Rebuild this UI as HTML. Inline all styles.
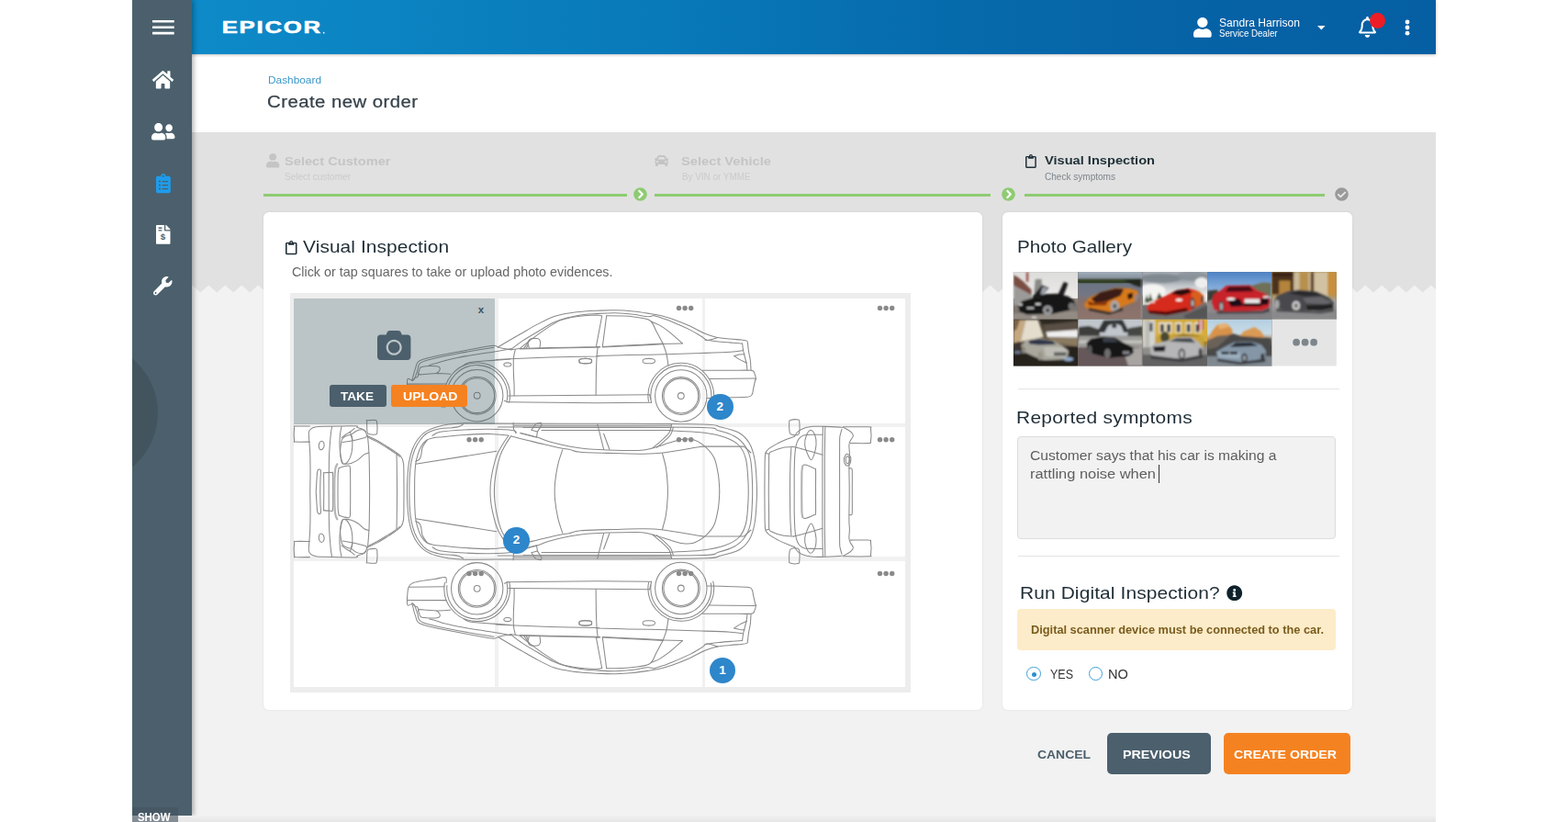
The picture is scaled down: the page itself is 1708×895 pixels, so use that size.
<!DOCTYPE html>
<html lang="en"><head><meta charset="utf-8"><title>Create new order</title>
<style>
html,body{margin:0;padding:0;background:#fff;}
body{width:1708px;height:895px;overflow:hidden;font-family:"Liberation Sans",sans-serif;}
#app{position:absolute;left:0;top:0;width:1708px;height:895px;overflow:hidden;}
.a{position:absolute;}
.t{position:absolute;white-space:nowrap;line-height:1;font-family:"Liberation Sans",sans-serif;}
svg{position:absolute;overflow:visible;}
</style></head>
<body><div id="app">
<!-- page backgrounds -->
<div class="a" style="left:209px;top:0;width:1354.5px;height:895px;background:#f2f2f2;"></div>
<div class="a" style="left:144px;top:888px;width:1419.5px;height:7px;background:linear-gradient(#f0f0f0,#e6e6e6);"></div>
<!-- grey band with zigzag bottom -->
<svg style="left:209px;top:144px;overflow:hidden;" width="1354.6" height="180" viewBox="209 144 1354.6 180">
<path id="zz" fill="#e1e1e1" d="M209 144H1564V314 L1576.6 310.5 L1567.6 318.4 L1558.7 310.5 L1549.8 318.4 L1540.8 310.5 L1531.9 318.4 L1523.0 310.5 L1514.0 318.4 L1505.1 310.5 L1496.1 318.4 L1487.2 310.5 L1478.3 318.4 L1469.3 310.5 L1460.4 318.4 L1451.5 310.5 L1442.5 318.4 L1114.3 310.5 L1105.3 318.4 L1096.4 310.5 L1087.5 318.4 L1078.5 310.5 L1069.5 318.4 L1060.6 310.5 L1051.7 318.4 L1042.7 310.5 L1033.8 318.4 L317.2 310.5 L308.2 318.4 L299.2 310.5 L290.2 318.4 L281.2 310.5 L272.2 318.4 L263.2 310.5 L254.2 318.4 L245.2 310.5 L236.2 318.4 L227.2 310.5 L218.2 318.4 L209.2 310.5 L200.2 318.4 L191.2 310.5L209 314Z"/>
</svg>
<!-- white title band -->
<div class="a" style="left:209px;top:59px;width:1354.5px;height:85px;background:#fff;"></div>
<!-- header -->
<div class="a" style="left:209px;top:0;width:1354.5px;height:59px;background:linear-gradient(90deg,#0e8ac8 0%,#0879b9 38%,#066aab 62%,#0661a5 85%,#065fa3 100%);box-shadow:0 1px 3px rgba(0,0,0,.25);"></div>
<!-- sidebar -->
<div class="a" style="left:144px;top:0;width:65.2px;height:888px;background:#4b606c;box-shadow:2px 0 5px rgba(0,0,0,.3);clip-path:inset(0 -12px 0 0);"></div>
<div class="a" style="left:144px;top:372px;width:66px;height:154px;overflow:hidden;"><div class="a" style="left:-125.200px;top:0.500px;width:153px;height:153px;border-radius:50%;background:#42555f;"></div></div>
<div class="a" style="left:144px;top:879px;width:50px;height:16px;background:rgba(70,84,96,.62);"></div>
<!-- step lines -->
<div class="a" style="left:287px;top:210.5px;width:396px;height:3px;background:#8ecb72;"></div>
<div class="a" style="left:712.5px;top:210.5px;width:366.5px;height:3px;background:#8ecb72;"></div>
<div class="a" style="left:1116px;top:210.5px;width:327px;height:3px;background:#8ecb72;"></div>
<!-- cards -->
<div class="a" style="left:287px;top:231px;width:782.5px;height:542px;background:#fff;border-radius:6px;box-shadow:0 0 3px rgba(0,0,0,.08);"></div>
<div class="a" style="left:1091.5px;top:231px;width:381px;height:542px;background:#fff;border-radius:6px;box-shadow:0 0 3px rgba(0,0,0,.08);"></div>
<!-- grid -->
<div class="a" style="left:315.6px;top:319.1px;width:676px;height:434.7px;background:#ededee;"></div>
<div class="a" style="left:320.4px;top:325px;width:218.6px;height:136px;background:#fff;"></div>
<div class="a" style="left:542.5px;top:325px;width:222px;height:136px;background:#fff;"></div>
<div class="a" style="left:768px;top:325px;width:218px;height:136px;background:#fff;"></div>
<div class="a" style="left:320.4px;top:464.5px;width:218.6px;height:141.5px;background:#fff;"></div>
<div class="a" style="left:542.5px;top:464.5px;width:222px;height:141.5px;background:#fff;"></div>
<div class="a" style="left:768px;top:464.5px;width:218px;height:141.5px;background:#fff;"></div>
<div class="a" style="left:320.4px;top:610.5px;width:218.6px;height:137.5px;background:#fff;"></div>
<div class="a" style="left:542.5px;top:610.5px;width:222px;height:137.5px;background:#fff;"></div>
<div class="a" style="left:768px;top:610.5px;width:218px;height:137.5px;background:#fff;"></div>
<div class="a" style="left:539px;top:325px;width:3.5px;height:423px;background:#f1f1f1;"></div>
<div class="a" style="left:764.5px;top:325px;width:3.5px;height:423px;background:#f1f1f1;"></div>
<div class="a" style="left:320.4px;top:461px;width:665.6px;height:3.5px;background:#f1f1f1;"></div>
<div class="a" style="left:320.4px;top:606px;width:665.6px;height:4.5px;background:#f1f1f1;"></div>
<!-- right panel pieces -->
<div class="a" style="left:1108.5px;top:423px;width:350px;height:1px;background:#e4e4e4;"></div>
<div class="a" style="left:1108.5px;top:604.5px;width:350px;height:1px;background:#e4e4e4;"></div>
<div class="a" style="left:1108px;top:475px;width:345.3px;height:109.8px;background:#f2f2f2;border:1px solid #dcdcdc;border-radius:4px;box-sizing:content-box;"></div>
<div class="a" style="left:1261.8px;top:505.5px;width:1.2px;height:20px;background:#333;"></div>
<div class="a" style="left:1108px;top:663.2px;width:347px;height:44.8px;background:#fdecc9;border-radius:4px;"></div>
<!-- buttons -->
<div class="a" style="left:1206px;top:798px;width:112.5px;height:44.5px;background:#4b5f6c;border-radius:5px;"></div>
<div class="a" style="left:1332.5px;top:798px;width:138px;height:44.5px;background:#f58220;border-radius:5px;"></div>

<!-- cars -->
<svg style="left:0;top:0" width="1708" height="895" viewBox="0 0 1708 895">
<g fill="none" stroke="#8a8a8a" stroke-width="1.05" stroke-linecap="round" stroke-linejoin="round">
<defs><g id="sidecar">
<path d="M542.5 378.0C544.2 377.0 548.4 374.4 552.5 372.0C556.7 369.5 561.9 366.4 567.6 363.2C573.2 360.0 580.3 355.7 586.4 352.6C592.4 349.4 598.1 346.4 603.9 344.4C609.8 342.4 616.0 341.5 621.5 340.7C626.9 339.8 631.7 339.4 636.5 339.0C641.3 338.6 644.4 338.5 650.0 338.3C655.6 338.1 663.4 337.6 670.1 337.8C676.8 337.9 683.9 338.4 690.2 339.0C696.4 339.6 702.7 340.7 707.7 341.5C712.7 342.3 716.1 342.8 720.3 343.8C724.4 344.8 727.6 345.7 732.8 347.5C738.0 349.4 745.7 352.5 751.6 355.1C757.4 357.7 762.9 361.1 767.9 363.2C772.9 365.3 779.4 366.9 781.7 367.6"/>
<path d="M556.3 380.8C558.4 379.2 563.8 374.7 568.8 371.4C573.8 368.0 580.7 364.0 586.4 360.7C592.0 357.4 597.4 353.7 602.7 351.3C607.9 348.9 612.1 347.5 617.7 346.0C623.3 344.6 631.1 343.3 636.5 342.5C641.9 341.8 644.4 341.8 650.0 341.5C655.6 341.2 663.4 340.7 670.1 340.8C676.8 340.9 684.3 341.6 690.2 342.3C696.0 342.9 701.5 344.6 705.2 344.8C709.0 345.0 711.5 343.7 712.7 343.5"/>
<path d="M566.3 379.5C568.2 378.0 573.0 373.8 577.6 370.4C582.2 366.9 588.7 362.1 593.9 358.6C599.1 355.1 604.3 351.6 608.9 349.4C613.5 347.3 616.9 346.6 621.5 345.7C626.1 344.7 631.7 344.2 636.5 343.8C641.3 343.3 646.8 343.0 650.0 343.0C653.2 343.1 654.8 343.9 655.7 344.0"/>
<path d="M660.7 343.8C663.3 343.8 671.5 343.8 676.4 344.0C681.3 344.2 685.0 344.2 690.2 345.0C695.4 345.8 703.5 346.1 707.7 348.8C711.9 351.5 712.8 357.1 715.2 361.3C717.6 365.5 721.0 372.0 722.1 374.1"/>
<path d="M712.7 343.8C714.4 344.3 719.4 345.8 722.8 346.9C726.1 348.1 728.0 348.7 732.8 350.7C737.6 352.7 746.4 356.5 751.6 359.1C756.8 361.7 761.0 364.5 764.1 366.3C767.2 368.2 767.5 370.1 770.4 370.4C773.3 370.6 779.8 368.1 781.7 367.6"/>
<path d="M709.6 350.1C711.2 350.8 715.8 352.6 719.0 354.4C722.2 356.3 724.9 358.1 729.0 361.3C733.1 364.6 741.0 371.8 743.4 373.9"/>
<path d="M743.4 373.9L722.1 374.5"/>
<path d="M655.7 344.0L649.4 377.4"/>
<path d="M660.7 343.8L656.3 377.4"/>
<path d="M566.3 379.5C571.8 379.4 585.0 378.9 598.9 378.6C612.9 378.3 641.6 377.8 650.0 377.6C658.5 377.4 649.5 377.4 649.4 377.4"/>
<path d="M566.3 380.0C571.8 379.9 585.0 379.5 598.9 379.2C612.9 379.0 641.6 378.5 650.0 378.2C658.5 378.0 649.5 378.0 649.4 378.0"/>
<path d="M656.3 377.4C660.7 377.2 671.7 376.7 682.7 376.1C693.6 375.6 715.6 374.4 722.1 374.1"/>
<path d="M656.3 378.0C660.7 377.8 671.7 377.3 682.7 376.7C693.6 376.2 715.6 375.1 722.1 374.7"/>
<path d="M576.4 378.6C576.1 377.8 575.0 375.4 575.1 373.9C575.2 372.3 575.8 370.4 577.0 369.5C578.1 368.5 580.3 368.3 582.0 368.2C583.7 368.2 585.9 368.4 587.0 369.1C588.1 369.8 588.5 371.0 588.6 372.6C588.8 374.2 588.0 377.6 587.9 378.6"/>
<path d="M570.7 379.1L576.6 371.1"/>
<path d="M573.2 379.1L575.3 375.4"/>
<path d="M540.0 391.4C543.6 391.2 551.5 390.8 561.3 390.4C571.1 390.0 584.1 389.6 598.9 389.1C613.7 388.7 641.3 388.2 650.0 387.9C658.8 387.6 645.9 387.6 651.3 387.4C656.8 387.2 670.2 386.9 682.7 386.6C695.1 386.4 712.3 386.1 725.9 385.8C739.5 385.4 752.5 384.9 764.1 384.5C775.7 384.1 787.9 383.7 795.4 383.3C803.0 382.8 806.9 381.9 809.2 381.6"/>
<path d="M781.7 367.6C784.0 367.8 791.1 368.7 795.4 369.1C799.8 369.5 804.9 369.8 808.0 370.1C811.0 370.4 812.5 370.5 813.6 371.1C814.7 371.7 814.3 373.4 814.5 373.9"/>
<path d="M767.9 370.1C770.4 370.4 777.9 371.5 782.9 372.0C787.9 372.5 793.7 372.9 797.9 373.2C802.2 373.6 806.8 374.0 808.6 374.1"/>
<path d="M814.5 373.9C814.7 375.3 815.0 379.5 815.5 382.6C816.0 385.8 817.0 389.2 817.4 392.7C817.8 396.1 817.9 401.5 818.0 403.3"/>
<path d="M808.6 374.1C808.8 375.5 809.1 379.1 809.8 382.6C810.6 386.1 812.3 391.7 813.0 395.2C813.7 398.6 813.8 402.0 814.0 403.3"/>
<path d="M799.8 387.6C800.8 387.4 803.6 386.5 805.5 386.1C807.3 385.8 810.2 385.8 811.1 385.8"/>
<path d="M799.8 387.6C800.8 388.3 803.2 390.2 805.5 391.4C807.8 392.7 812.3 394.5 813.6 395.2"/>
<path d="M765.4 403.3C770.4 403.3 786.7 403.3 795.4 403.3C804.2 403.3 813.6 402.8 818.0 403.3C822.4 403.8 820.8 404.9 821.8 406.4C822.7 408.0 823.4 411.7 823.6 412.7C823.8 413.7 823.5 410.7 823.0 412.5C822.5 414.4 821.1 421.0 820.5 423.8C819.9 426.6 820.1 428.1 819.2 429.4C818.4 430.8 819.0 431.4 815.5 432.0C811.9 432.5 805.5 432.6 797.9 432.8C790.4 433.1 775.0 433.5 770.4 433.6"/>
<path d="M772.3 412.5L822.4 411.9"/>
<path d="M722.1 374.1C722.8 375.9 724.9 381.1 725.9 385.1C726.9 389.2 727.7 396.1 728.0 398.3"/>
<path d="M553.8 431.1L650.0 430.2L707.7 429.8"/>
<path d="M551.9 437.8L650.0 438.8L709.6 438.2"/>
<path d="M549.4 436.3L553.2 437.8"/>
<path d="M707.7 429.8L709.6 438.2"/>
<path d="M561.3 380.8C561.0 382.3 559.7 386.1 559.4 390.2C559.1 394.2 559.3 400.2 559.4 405.2C559.5 410.2 560.0 416.0 560.1 420.2C560.2 424.5 560.1 429.0 560.1 430.7"/>
<path d="M651.3 377.4C651.1 379.1 650.4 383.0 650.1 387.6C649.8 392.3 649.6 398.1 649.4 405.2C649.3 412.3 649.1 425.9 649.1 430.1"/>
<path d="M542.5 378.0C541.7 377.7 541.1 376.0 537.4 376.2C533.7 376.4 526.8 377.9 520.5 379.0C514.2 380.1 506.4 381.6 499.4 382.9C492.3 384.3 484.1 385.9 478.3 387.1C472.4 388.4 467.7 389.4 464.2 390.3C460.6 391.2 458.8 391.9 457.1 392.8C455.5 393.6 455.0 394.4 454.3 395.6C453.6 396.8 453.4 398.2 452.9 399.8C452.4 401.4 451.7 403.6 451.1 405.4C450.6 407.3 450.1 409.7 449.7 411.1C449.3 412.5 448.9 413.4 448.7 413.9"/>
<path d="M538.1 378.3C535.2 378.8 527.0 380.1 520.5 381.1C514.1 382.2 506.4 383.4 499.4 384.7C492.3 386.0 484.1 387.6 478.3 388.9C472.4 390.2 467.5 391.4 464.2 392.4C460.9 393.4 459.9 394.0 458.5 394.9C457.2 395.8 456.7 396.4 456.1 397.7C455.5 399.0 455.5 400.7 455.0 402.6C454.5 404.5 453.5 407.2 452.9 409.0C452.3 410.7 451.8 412.2 451.1 413.2C450.4 414.1 449.1 414.4 448.7 414.6"/>
<path d="M566.3 379.5C564.7 379.7 558.0 380.7 556.3 380.8C554.6 380.8 558.5 379.4 556.1 379.7C553.6 380.0 547.6 381.6 541.6 382.5C535.7 383.5 527.5 384.6 520.5 385.7C513.5 386.8 505.2 388.1 499.4 389.2C493.5 390.4 489.3 391.4 485.3 392.4C481.3 393.5 478.4 394.7 475.4 395.6C472.5 396.4 469.0 397.2 467.7 397.5"/>
<path d="M542.5 378.0C543.6 378.2 546.5 379.0 548.8 379.5C551.1 380.0 555.0 380.5 556.3 380.8"/>
<path d="M556.1 391.0C551.3 391.4 534.9 392.5 527.5 393.1C520.2 393.7 515.8 393.8 512.1 394.5C508.3 395.3 506.2 397.2 505.0 397.7"/>
<path d="M458.5 399.8C460.4 399.0 464.6 398.7 467.7 398.5C470.8 398.4 475.3 398.5 477.2 399.0C479.1 399.4 479.1 400.4 479.3 401.2C479.5 402.1 479.0 403.1 478.3 404.0C477.5 404.9 477.2 406.0 475.1 406.5C473.0 407.0 468.7 407.0 465.6 407.2C462.4 407.4 457.5 408.3 456.1 407.7C454.6 407.0 456.4 404.6 456.8 403.3C457.2 402.0 456.7 400.6 458.5 399.8Z"/>
<path d="M475.4 406.6C476.8 406.6 481.4 406.6 483.9 406.7C486.4 406.8 489.5 407.1 490.6 407.2"/>
<path d="M486.1 436.9C486.0 437.9 487.2 442.3 485.1 442.9C483.0 443.6 478.0 441.7 473.6 441.1C469.2 440.4 462.7 439.8 458.6 438.9C454.4 438.1 450.8 437.2 448.5 436.1C446.3 434.9 445.8 433.9 445.0 431.9C444.2 429.9 444.0 426.9 443.8 424.1C443.5 421.4 443.4 417.4 443.5 415.4C443.6 413.4 443.6 412.4 444.5 412.2C445.5 412.1 448.4 414.0 449.2 414.4"/>
<path d="M445.4 432.3L484.2 432.7"/>
<path d="M443.5 418.1L486.1 417.9"/>
<path d="M449.2 414.4C449.7 413.9 451.4 412.0 452.3 411.4C453.2 410.7 454.2 411.2 454.8 410.4C455.4 409.6 455.8 407.2 456.1 406.6"/>
<path d="M550.5 395.2C552.2 394.7 553.5 394.7 555.2 395.2C556.9 395.6 556.9 396.0 556.9 396.9C556.9 397.9 556.9 398.2 555.2 398.7C553.5 399.1 552.2 399.1 550.5 398.7C548.8 398.2 548.8 397.9 548.8 396.9C548.8 396.0 548.8 395.6 550.5 395.2Z"/>
<path d="M633.2 390.8C636.2 390.2 639.3 390.2 642.3 390.8C645.4 391.4 644.6 391.9 644.6 393.1C644.6 394.3 645.4 394.8 642.3 395.4C639.3 396.0 636.2 396.0 633.2 395.4C630.1 394.8 630.9 394.3 630.9 393.1C630.9 391.9 630.1 391.4 633.2 390.8Z"/>
<path d="M633.3 390.8C636.3 390.2 639.2 390.2 642.1 390.8C645.1 391.4 644.4 391.9 644.4 393.1C644.4 394.3 645.1 394.8 642.1 395.4C639.2 396.0 636.3 396.0 633.3 395.4C630.4 394.8 631.0 394.3 631.0 393.1C631.0 391.9 630.4 391.4 633.3 390.8Z"/>
<path d="M702.5 390.8C705.4 390.2 708.1 390.2 711.0 390.8C713.9 391.4 713.4 391.9 713.4 393.1C713.4 394.3 713.9 394.8 711.0 395.4C708.1 396.0 705.4 396.0 702.5 395.4C699.6 394.8 700.2 394.3 700.2 393.1C700.2 391.9 699.6 391.4 702.5 390.8Z"/>
<circle cx="519.7" cy="430.7" r="28.2"/>
<circle cx="519.7" cy="430.7" r="18.9"/>
<circle cx="519.7" cy="430.7" r="20.4"/>
<circle cx="519.7" cy="430.7" r="3.4"/>
<path d="M486.9 434.1A33.0 33.0 0 1 1 552.2 436.4"/>
<path d="M484.4 436.9A35.8 35.8 0 1 1 554.7 438.1"/>
<circle cx="741.8" cy="431.0" r="28.2"/>
<circle cx="741.8" cy="431.0" r="18.9"/>
<circle cx="741.8" cy="431.0" r="20.4"/>
<circle cx="741.8" cy="431.0" r="3.4"/>
<path d="M709.0 434.4A33.0 33.0 0 1 1 774.3 436.7"/>
<path d="M706.5 437.2A35.8 35.8 0 1 1 776.8 438.4"/>
</g>
</defs>
<use href="#sidecar"/>
<use href="#sidecar" transform="translate(0 1071.5) scale(1 -1)"/>
<g id="topcar">
<path d="M824.2 525.0C823.9 517.5 823.3 507.1 822.0 500.0C820.7 492.9 819.1 487.3 816.2 482.5C813.4 477.7 810.2 474.2 805.0 471.2C799.8 468.3 791.7 466.5 785.0 465.0C778.3 463.5 786.7 462.6 765.0 462.0C743.3 461.4 692.1 461.4 655.0 461.2C617.9 461.1 567.4 461.2 542.5 461.1C517.6 461.0 514.6 460.5 505.7 460.7C496.7 460.9 493.8 461.4 488.8 462.1C483.8 462.8 479.9 463.6 475.6 464.9C471.4 466.2 466.9 467.8 463.5 470.1C460.0 472.3 457.4 475.4 455.0 478.5C452.7 481.6 450.9 484.8 449.4 488.8C447.8 492.9 446.6 497.4 445.6 502.9C444.7 508.4 444.1 514.1 443.8 521.7C443.4 529.2 443.4 540.8 443.8 548.3C444.1 555.9 444.7 561.6 445.6 567.1C446.6 572.6 447.8 577.1 449.4 581.2C450.9 585.2 452.7 588.4 455.0 591.5C457.4 594.6 460.0 597.7 463.5 599.9C466.9 602.2 471.4 603.8 475.6 605.1C479.9 606.4 483.8 607.2 488.8 607.9C493.8 608.6 496.7 609.1 505.7 609.3C514.6 609.5 517.6 609.0 542.5 608.9C567.4 608.8 617.9 608.9 655.0 608.8C692.1 608.6 743.3 608.6 765.0 608.0C786.7 607.4 778.3 606.5 785.0 605.0C791.7 603.5 799.8 601.7 805.0 598.8C810.2 595.8 813.4 592.3 816.2 587.5C819.1 582.7 820.7 577.1 822.0 570.0C823.3 562.9 823.9 552.5 824.2 545.0C824.6 537.5 824.6 532.5 824.2 525.0Z"/>
<path d="M504.7 461.9C503.9 462.3 502.1 463.8 500.0 464.4C498.0 465.1 496.0 465.3 492.5 465.7C489.1 466.1 483.9 465.8 479.4 466.8C474.9 467.8 469.0 469.4 465.3 471.5C461.7 473.6 459.6 476.4 457.4 479.5C455.1 482.5 453.3 485.9 451.7 489.8C450.2 493.7 448.9 497.6 448.0 502.9C447.0 508.2 446.4 514.1 446.1 521.7C445.8 529.2 445.8 540.8 446.1 548.3C446.4 555.9 447.0 561.8 448.0 567.1C448.9 572.4 450.2 576.3 451.7 580.2C453.3 584.1 455.1 587.5 457.4 590.5C459.6 593.6 461.7 596.4 465.3 598.5C469.0 600.6 474.9 602.2 479.4 603.2C483.9 604.2 489.1 603.9 492.5 604.3C496.0 604.7 498.0 604.9 500.0 605.6C502.1 606.2 503.9 607.7 504.7 608.1"/>
<path d="M554.0 474.3C550.6 474.0 541.9 472.5 533.8 472.4C525.8 472.3 514.3 473.0 505.7 473.5C497.1 474.1 487.8 475.2 482.2 475.7C476.6 476.2 474.9 476.2 471.9 476.8C468.9 477.5 466.6 477.9 464.4 479.5C462.2 481.0 460.3 483.4 458.8 486.0C457.2 488.7 456.0 492.1 455.0 495.4C454.0 498.7 453.2 501.3 452.7 505.7C452.1 510.1 451.9 514.6 451.7 521.7C451.6 528.8 451.6 541.2 451.7 548.3C451.9 555.4 452.1 559.9 452.7 564.3C453.2 568.7 454.0 571.3 455.0 574.6C456.0 577.9 457.2 581.3 458.8 584.0C460.3 586.6 462.2 589.0 464.4 590.5C466.6 592.1 468.9 592.5 471.9 593.2C474.9 593.8 476.6 593.8 482.2 594.3C487.8 594.8 497.1 595.9 505.7 596.5C514.3 597.0 525.8 597.7 533.8 597.6C541.9 597.5 550.6 596.0 554.0 595.7"/>
<path d="M542.5 465.0C561.2 465.0 617.9 464.9 655.0 465.0C692.1 465.1 743.8 464.9 765.0 465.5C786.2 466.1 776.7 467.2 782.5 468.8C788.3 470.3 795.2 472.3 800.0 475.0C804.8 477.7 808.3 480.8 811.2 485.0C814.2 489.2 816.1 493.3 817.5 500.0C818.9 506.7 819.2 517.5 819.5 525.0C819.8 532.5 819.8 537.5 819.5 545.0C819.2 552.5 818.9 563.3 817.5 570.0C816.1 576.7 814.2 580.8 811.2 585.0C808.3 589.2 804.8 592.3 800.0 595.0C795.2 597.7 788.3 599.7 782.5 601.2C776.7 602.8 786.2 603.9 765.0 604.5C743.8 605.1 692.1 604.9 655.0 605.0C617.9 605.1 561.2 605.0 542.5 605.0"/>
<path d="M730.0 468.8C736.2 469.2 757.5 470.0 767.5 471.2C777.5 472.5 783.8 474.0 790.0 476.2C796.2 478.5 801.2 481.0 805.0 485.0C808.8 489.0 810.8 493.3 812.5 500.0C814.2 506.7 814.6 517.5 815.0 525.0C815.4 532.5 815.4 537.5 815.0 545.0C814.6 552.5 814.2 563.3 812.5 570.0C810.8 576.7 808.8 581.0 805.0 585.0C801.2 589.0 796.2 591.5 790.0 593.8C783.8 596.0 777.5 597.5 767.5 598.8C757.5 600.0 736.2 600.8 730.0 601.2"/>
<path d="M471.0 474.3C472.4 473.6 473.6 471.3 479.4 470.3C485.2 469.2 496.6 468.5 505.7 468.0C514.7 467.5 524.9 467.1 533.8 467.3C542.7 467.4 554.4 468.0 559.1 468.7C563.8 469.4 561.5 471.0 562.0 471.5"/>
<path d="M471.0 595.7C472.4 596.4 473.6 598.7 479.4 599.7C485.2 600.8 496.6 601.5 505.7 602.0C514.7 602.5 524.9 602.9 533.8 602.7C542.7 602.6 554.4 602.0 559.1 601.3C563.8 600.6 561.5 599.0 562.0 598.5"/>
<path d="M452.7 502.4C453.4 502.0 455.9 501.3 456.9 500.1C457.9 498.9 458.2 497.6 458.8 495.4C459.3 493.2 459.1 489.7 460.2 487.0C461.3 484.2 464.5 480.3 465.3 479.0"/>
<path d="M452.7 567.6C453.4 568.0 455.9 568.7 456.9 569.9C457.9 571.1 458.2 572.4 458.8 574.6C459.3 576.8 459.1 580.3 460.2 583.0C461.3 585.8 464.5 589.7 465.3 591.0"/>
<path d="M452.7 505.2L540.8 491.2"/>
<path d="M452.7 564.8L540.8 578.8"/>
<path d="M560.0 463.2L731.2 463.2"/>
<path d="M560.0 606.8L731.2 606.8"/>
<path d="M570.0 465.5L731.2 465.5"/>
<path d="M570.0 604.5L731.2 604.5"/>
<path d="M590.0 468.5L730.0 468.5"/>
<path d="M590.0 601.5L730.0 601.5"/>
<path d="M554.0 474.3C553.0 475.8 550.0 479.7 547.9 483.2C545.8 486.7 543.2 490.6 541.3 495.4C539.4 500.2 537.8 507.0 536.6 512.3C535.5 517.6 534.7 522.2 534.3 527.3C533.9 532.4 533.9 537.6 534.3 542.7C534.7 547.8 535.5 552.4 536.6 557.7C537.8 563.0 539.4 569.8 541.3 574.6C543.2 579.4 545.8 583.3 547.9 586.8C550.0 590.3 553.0 594.2 554.0 595.7"/>
<path d="M556.3 475.2C555.4 476.7 552.6 480.8 550.7 484.1C548.8 487.5 546.7 490.7 545.1 495.4C543.4 500.1 541.9 507.0 540.8 512.3C539.8 517.6 539.0 522.2 538.7 527.3C538.3 532.4 538.3 537.6 538.7 542.7C539.0 547.8 539.8 552.4 540.8 557.7C541.9 563.0 543.4 569.9 545.1 574.6C546.7 579.3 548.8 582.5 550.7 585.9C552.6 589.2 555.4 593.3 556.3 594.8"/>
<path d="M612.7 489.8C611.9 492.5 609.0 500.1 607.7 506.1C606.3 512.2 605.1 519.9 604.5 526.2C604.0 532.5 604.0 537.5 604.5 543.8C605.1 550.1 606.3 557.8 607.7 563.9C609.0 569.9 611.9 577.5 612.7 580.2"/>
<path d="M721.5 493.6C722.1 496.1 724.3 503.2 725.3 508.6C726.2 514.1 726.8 520.3 727.1 526.2C727.5 532.0 727.5 538.0 727.1 543.8C726.8 549.7 726.2 555.9 725.3 561.4C724.3 566.8 722.1 573.9 721.5 576.4"/>
<path d="M567.6 471.7C570.5 472.4 579.9 474.5 585.1 476.1C590.3 477.6 593.1 479.4 598.9 481.1C604.7 482.7 613.3 484.8 620.0 486.1C626.6 487.4 632.5 488.2 638.8 488.8C645.1 489.5 648.2 489.6 657.6 489.8C667.0 490.1 686.4 490.8 695.2 490.5C704.0 490.1 704.0 489.5 710.2 488.0C716.5 486.4 727.1 482.7 732.8 481.1C738.4 479.5 740.3 478.7 744.1 478.3C747.8 477.9 751.4 477.5 755.3 478.8C759.3 480.1 764.1 482.8 767.9 486.1C771.6 489.4 775.5 493.6 777.9 498.6C780.3 503.6 781.3 511.1 782.3 516.2C783.2 521.2 783.3 525.5 783.5 528.7C783.8 531.8 783.7 533.9 783.8 535.0"/>
<path d="M567.6 598.3C570.5 597.6 579.9 595.5 585.1 593.9C590.3 592.4 593.1 590.6 598.9 588.9C604.7 587.3 613.3 585.2 620.0 583.9C626.6 582.6 632.5 581.8 638.8 581.2C645.1 580.5 648.2 580.4 657.6 580.2C667.0 579.9 686.4 579.2 695.2 579.5C704.0 579.9 704.0 580.5 710.2 582.0C716.5 583.6 727.1 587.3 732.8 588.9C738.4 590.5 740.3 591.3 744.1 591.7C747.8 592.1 751.4 592.5 755.3 591.2C759.3 589.9 764.1 587.2 767.9 583.9C771.6 580.6 775.5 576.4 777.9 571.4C780.3 566.4 781.3 558.9 782.3 553.8C783.2 548.8 783.3 544.5 783.5 541.3C783.8 538.2 783.7 536.1 783.8 535.0"/>
<path d="M556.3 474.8C559.2 475.5 567.8 477.7 573.8 479.2C579.9 480.7 586.4 482.4 592.6 483.8C598.9 485.3 606.9 487.1 611.4 488.0C616.0 488.9 616.5 488.5 620.0 489.2C623.5 489.9 624.2 491.6 632.5 492.3C640.9 493.1 658.8 493.3 670.1 493.6C681.4 493.9 691.4 494.3 700.2 494.2C709.0 494.1 713.1 494.1 722.8 493.0C732.4 491.8 750.7 488.5 757.8 487.3C764.9 486.2 764.1 486.3 765.4 486.1"/>
<path d="M556.3 595.2C559.2 594.5 567.8 592.3 573.8 590.8C579.9 589.3 586.4 587.6 592.6 586.2C598.9 584.7 606.9 582.9 611.4 582.0C616.0 581.1 616.5 581.5 620.0 580.8C623.5 580.1 624.2 578.4 632.5 577.7C640.9 576.9 658.8 576.7 670.1 576.4C681.4 576.1 691.4 575.7 700.2 575.8C709.0 575.9 713.1 575.9 722.8 577.0C732.4 578.2 750.7 581.5 757.8 582.7C764.9 583.8 764.1 583.7 765.4 583.9"/>
<path d="M765.4 486.1L810.5 486.1L818.0 493.0"/>
<path d="M765.4 583.9L810.5 583.9L818.0 577.0"/>
<path d="M650.7 461.6L657.6 489.2"/>
<path d="M650.7 608.4L657.6 580.8"/>
<path d="M657.6 472.3L663.9 489.2"/>
<path d="M657.6 597.7L663.9 580.8"/>
<path d="M731.5 462.3C731.1 463.7 730.9 468.1 729.0 471.0C727.1 474.0 723.3 477.0 720.3 479.8C717.2 482.6 712.4 486.6 710.9 488.0"/>
<path d="M731.5 607.7C731.1 606.3 730.9 601.9 729.0 599.0C727.1 596.0 723.3 593.0 720.3 590.2C717.2 587.4 712.4 583.4 710.9 582.0"/>
<path d="M733.4 465.4C732.9 466.8 732.1 470.9 730.3 473.5C728.5 476.2 725.3 478.8 722.8 481.1C720.3 483.4 716.5 486.3 715.2 487.3"/>
<path d="M733.4 604.6C732.9 603.2 732.1 599.1 730.3 596.5C728.5 593.8 725.3 591.2 722.8 588.9C720.3 586.6 716.5 583.7 715.2 582.7"/>
<path d="M559.1 460.2C559.2 461.4 559.1 465.4 559.6 467.3C560.1 469.1 561.6 470.8 562.0 471.5"/>
<path d="M559.1 609.8C559.2 608.6 559.1 604.6 559.6 602.7C560.1 600.9 561.6 599.2 562.0 598.5"/>
<path d="M578.8 468.2L583.5 461.6L589.2 460.2L590.1 462.6L585.4 470.1Z"/>
<path d="M578.8 601.8L583.5 608.4L589.2 609.8L590.1 607.4L585.4 599.9Z"/>
<path d="M566.6 471.5L584.5 476.2L585.4 470.1"/>
<path d="M566.6 598.5L584.5 593.8L585.4 599.9"/>
</g>
<g id="frontcar">
<path d="M337.4 464.0C334.8 464.0 325.0 463.8 322.2 464.0C319.4 464.3 320.8 462.8 320.6 465.4C320.3 468.1 320.3 477.1 320.6 479.7C320.8 482.3 319.1 480.9 321.9 481.1C324.7 481.4 334.8 481.1 337.4 481.1"/>
<path d="M337.4 606.6C334.8 606.6 325.0 606.8 322.2 606.6C319.4 606.3 320.8 607.8 320.6 605.2C320.3 602.5 320.3 593.5 320.6 590.9C320.8 588.3 319.1 589.7 321.9 589.5C324.7 589.2 334.8 589.5 337.4 589.5"/>
<path d="M400.0 474.0C399.5 473.0 398.5 469.7 396.7 468.3C394.9 466.9 390.9 466.2 389.1 465.4C387.4 464.7 392.4 463.9 386.3 463.7C380.1 463.5 359.2 464.1 352.1 464.3C345.0 464.5 345.8 464.5 343.5 465.0C341.3 465.4 340.0 465.9 338.8 466.9C337.6 467.8 336.8 468.7 336.4 470.7C336.1 472.6 336.5 475.0 336.7 478.7C336.9 482.5 337.4 487.4 337.7 493.0C337.9 498.5 338.0 505.6 338.0 512.0C338.1 518.3 337.9 526.4 337.8 531.0C337.8 535.6 337.8 535.0 337.8 539.6C337.9 544.2 338.1 552.3 338.0 558.6C338.0 565.0 337.9 572.1 337.7 577.6C337.4 583.2 336.9 588.1 336.7 591.9C336.5 595.6 336.1 598.0 336.4 599.9C336.8 601.9 337.6 602.8 338.8 603.7C340.0 604.7 341.3 605.2 343.5 605.6C345.8 606.1 345.0 606.1 352.1 606.3C359.2 606.5 380.1 607.1 386.3 606.9C392.4 606.7 387.4 605.9 389.1 605.2C390.9 604.4 394.9 603.7 396.7 602.3C398.5 600.9 399.5 597.6 400.0 596.6"/>
<path d="M361.6 464.5C361.3 466.1 360.6 469.2 360.2 474.0C359.7 478.7 359.1 486.7 358.7 493.0C358.4 499.3 358.4 505.6 358.3 512.0C358.2 518.3 358.2 526.4 358.2 531.0C358.1 535.6 358.1 535.0 358.2 539.6C358.2 544.2 358.2 552.3 358.3 558.6C358.4 565.0 358.4 571.3 358.7 577.6C359.1 583.9 359.7 591.9 360.2 596.6C360.6 601.4 361.3 604.5 361.6 606.1"/>
<path d="M372.0 464.5C371.8 465.8 371.0 469.1 370.6 472.1C370.3 475.1 369.9 479.1 369.9 482.5C369.9 486.0 370.3 490.0 370.6 493.0C371.0 496.0 371.6 498.6 372.0 500.6C372.5 502.6 373.2 504.1 373.5 504.9"/>
<path d="M372.0 606.1C371.8 604.8 371.0 601.5 370.6 598.5C370.3 595.5 369.9 591.5 369.9 588.1C369.9 584.6 370.3 580.6 370.6 577.6C371.0 574.6 371.6 572.0 372.0 570.0C372.5 568.0 373.2 566.5 373.5 565.7"/>
<path d="M350.2 480.2C351.0 480.2 352.5 481.4 352.8 482.5C353.2 483.7 353.1 486.1 352.6 487.3C352.0 488.5 350.6 489.7 349.7 489.7C348.9 489.7 347.8 488.5 347.5 487.3C347.2 486.1 347.4 483.7 347.8 482.5C348.3 481.4 349.3 480.2 350.2 480.2Z"/>
<path d="M350.2 590.4C351.0 590.4 352.5 589.2 352.8 588.1C353.2 586.9 353.1 584.5 352.6 583.3C352.0 582.1 350.6 580.9 349.7 580.9C348.9 580.9 347.8 582.1 347.5 583.3C347.2 584.5 347.4 586.9 347.8 588.1C348.3 589.2 349.3 590.4 350.2 590.4Z"/>
<path d="M371.6 482.5C372.0 480.0 372.0 479.1 373.0 477.8C374.0 476.4 376.1 475.1 377.7 474.5C379.3 473.8 381.4 473.1 382.5 474.0C383.5 474.9 383.8 476.5 383.9 479.7C384.0 482.9 383.7 489.3 383.0 493.0C382.2 496.6 381.0 499.5 379.6 501.5C378.3 503.6 376.1 505.2 374.9 505.3C373.6 505.5 372.7 504.5 372.0 502.5C371.3 500.4 370.7 496.3 370.6 493.0C370.5 489.7 371.2 485.1 371.6 482.5Z"/>
<path d="M371.6 588.1C372.0 590.6 372.0 591.5 373.0 592.8C374.0 594.2 376.1 595.5 377.7 596.1C379.3 596.8 381.4 597.5 382.5 596.6C383.5 595.7 383.8 594.1 383.9 590.9C384.0 587.7 383.7 581.3 383.0 577.6C382.2 574.0 381.0 571.1 379.6 569.1C378.3 567.0 376.1 565.4 374.9 565.3C373.6 565.1 372.7 566.1 372.0 568.1C371.3 570.2 370.7 574.3 370.6 577.6C370.5 580.9 371.2 585.5 371.6 588.1Z"/>
<path d="M372.0 476.8C372.8 476.2 375.2 474.2 376.8 473.0C378.4 471.9 379.9 471.3 381.5 470.2C383.1 469.1 385.5 467.0 386.3 466.4"/>
<path d="M372.0 593.8C372.8 594.4 375.2 596.4 376.8 597.6C378.4 598.7 379.9 599.3 381.5 600.4C383.1 601.5 385.5 603.6 386.3 604.2"/>
<path d="M382.5 473.5C383.4 472.8 386.1 470.2 388.2 469.2C390.2 468.3 393.1 467.7 394.8 467.8C396.6 468.0 398.0 469.8 398.6 470.2"/>
<path d="M382.5 597.1C383.4 597.8 386.1 600.4 388.2 601.4C390.2 602.3 393.1 602.9 394.8 602.8C396.6 602.6 398.0 600.8 398.6 600.4"/>
<path d="M373.0 481.6C374.9 481.3 380.3 480.6 384.4 479.7C388.5 478.8 395.1 477.3 397.7 476.4C400.2 475.4 399.3 474.4 399.6 474.0"/>
<path d="M373.0 589.0C374.9 589.3 380.3 590.0 384.4 590.9C388.5 591.8 395.1 593.3 397.7 594.2C400.2 595.2 399.3 596.2 399.6 596.6"/>
<path d="M381.5 470.2C381.7 470.8 382.1 472.4 382.5 474.0C382.9 475.6 383.7 478.7 383.9 479.7"/>
<path d="M381.5 600.4C381.7 599.8 382.1 598.2 382.5 596.6C382.9 595.0 383.7 591.9 383.9 590.9"/>
<path d="M400.0 457.8C401.5 457.6 406.9 457.1 408.6 457.4C410.3 457.6 410.1 457.0 410.5 459.3C410.9 461.6 411.0 468.8 410.8 471.1C410.5 473.4 410.5 472.8 409.1 473.0C407.6 473.3 403.4 473.0 401.9 472.6C400.4 472.1 400.4 472.5 400.0 470.2C399.6 467.9 399.6 460.9 399.6 458.8C399.6 456.7 398.5 458.1 400.0 457.8Z"/>
<path d="M400.0 612.8C401.5 613.0 406.9 613.5 408.6 613.2C410.3 613.0 410.1 613.6 410.5 611.3C410.9 609.0 411.0 601.8 410.8 599.5C410.5 597.2 410.5 597.8 409.1 597.6C407.6 597.3 403.4 597.6 401.9 598.0C400.4 598.5 400.4 598.1 400.0 600.4C399.6 602.7 399.6 609.7 399.6 611.8C399.6 613.9 398.5 612.5 400.0 612.8Z"/>
<path d="M400.0 474.5C401.9 475.3 407.6 477.9 411.0 479.7C414.4 481.5 417.3 483.4 420.5 485.4C423.6 487.4 427.3 489.7 430.0 491.6C432.7 493.5 435.0 494.6 436.6 496.8C438.2 498.9 438.9 500.3 439.5 504.4C440.0 508.5 439.9 514.0 439.9 521.5C440.0 528.9 440.0 541.7 439.9 549.1C439.9 556.6 440.0 562.1 439.5 566.2C438.9 570.3 438.2 571.7 436.6 573.8C435.0 576.0 432.7 577.1 430.0 579.0C427.3 580.9 423.6 583.2 420.5 585.2C417.3 587.2 414.4 589.1 411.0 590.9C407.6 592.7 401.9 595.3 400.0 596.1"/>
<path d="M401.5 476.4C403.1 477.2 407.8 479.4 411.0 481.1C414.1 482.9 417.3 484.8 420.5 486.8C423.6 488.8 427.4 491.2 430.0 493.0C432.5 494.7 434.7 496.5 435.7 497.3"/>
<path d="M401.5 594.2C403.1 593.4 407.8 591.2 411.0 589.5C414.1 587.7 417.3 585.8 420.5 583.8C423.6 581.8 427.4 579.4 430.0 577.6C432.5 575.9 434.7 574.1 435.7 573.3"/>
<path d="M432.0 494.9C432.1 497.7 432.3 506.0 432.3 512.0C432.4 518.0 432.5 526.4 432.5 531.0C432.6 535.6 432.6 535.0 432.5 539.6C432.5 544.2 432.4 552.6 432.3 558.6C432.3 564.6 432.1 572.9 432.0 575.7"/>
<path d="M400.5 474.9C400.8 478.0 401.6 486.8 401.9 493.0C402.3 499.2 402.3 505.6 402.4 512.0C402.5 518.3 402.6 526.4 402.6 531.0C402.6 535.6 402.6 535.0 402.6 539.6C402.6 544.2 402.5 552.3 402.4 558.6C402.3 565.0 402.3 571.4 401.9 577.6C401.6 583.8 400.8 592.6 400.5 595.7"/>
<path d="M374.9 505.3C376.1 505.2 379.9 505.2 382.5 504.4C385.0 503.6 387.7 502.2 390.1 500.6C392.4 499.0 394.7 496.2 396.7 494.9C398.7 493.6 401.1 493.3 401.9 493.0"/>
<path d="M374.9 565.3C376.1 565.4 379.9 565.4 382.5 566.2C385.0 567.0 387.7 568.4 390.1 570.0C392.4 571.6 394.7 574.4 396.7 575.7C398.7 577.0 401.1 577.3 401.9 577.6"/>
<path d="M369.2 509.6C370.1 509.3 373.0 508.1 374.9 507.7C376.8 507.3 379.5 506.5 380.6 507.2C381.7 507.9 381.3 508.0 381.5 512.0C381.7 515.9 381.7 526.4 381.7 531.0C381.7 535.6 381.7 535.0 381.7 539.6C381.7 544.2 381.7 554.7 381.5 558.6C381.3 562.6 381.7 562.7 380.6 563.4C379.5 564.1 376.8 563.3 374.9 562.9C373.0 562.5 370.1 561.3 369.2 561.0"/>
<path d="M369.2 509.6C369.0 510.6 368.4 512.2 368.2 515.8C368.0 519.3 368.1 527.0 368.0 531.0C368.0 534.9 368.0 535.7 368.0 539.6C368.1 543.6 368.0 551.3 368.2 554.8C368.4 558.4 369.0 560.0 369.2 561.0"/>
<path d="M352.6 514.8C353.9 514.7 359.0 514.2 360.6 514.4C362.3 514.5 362.2 513.0 362.5 515.8C362.9 518.5 362.7 527.0 362.7 531.0C362.8 534.9 362.8 535.7 362.7 539.6C362.7 543.6 362.9 552.1 362.5 554.8C362.2 557.6 362.3 556.1 360.6 556.2C359.0 556.4 353.9 555.9 352.6 555.8"/>
<path d="M352.6 514.8C352.6 517.5 352.7 526.8 352.8 531.0C352.8 535.1 352.8 535.5 352.8 539.6C352.7 543.8 352.6 553.1 352.6 555.8"/>
<path d="M345.4 515.8C345.6 515.1 345.8 512.8 346.2 512.0C346.6 511.2 347.3 511.0 347.8 511.0C348.4 511.1 349.2 510.7 349.4 512.5C349.6 514.2 349.2 517.9 349.0 521.5C348.9 525.0 348.8 531.3 348.8 533.8C348.7 536.4 348.7 534.2 348.8 536.8C348.8 539.3 348.9 545.6 349.0 549.1C349.2 552.7 349.6 556.4 349.4 558.1C349.2 559.9 348.4 559.5 347.8 559.6C347.3 559.6 346.6 559.4 346.2 558.6C345.8 557.8 345.6 555.5 345.4 554.8"/>
<path d="M345.4 515.8C345.2 518.8 344.5 530.3 344.3 533.8C344.1 537.3 344.1 533.3 344.3 536.8C344.5 540.3 345.2 551.8 345.4 554.8"/>
<path d="M367.3 505.3C367.0 506.1 365.9 507.4 365.4 510.1C364.9 512.8 364.6 517.7 364.4 521.5C364.3 525.3 364.4 530.2 364.3 532.9C364.3 535.6 364.3 535.0 364.3 537.7C364.4 540.4 364.3 545.3 364.4 549.1C364.6 552.9 364.9 557.8 365.4 560.5C365.9 563.2 367.0 564.5 367.3 565.3" stroke="#b5b5b5" stroke-width="2.2"/>
</g>
<g id="rearcar">
<path d="M865.4 475.2C864.1 475.7 860.5 476.9 857.5 478.1C854.6 479.3 851.0 480.8 847.7 482.5C844.4 484.3 840.1 486.6 837.8 488.4C835.5 490.2 834.7 490.7 833.9 493.4C833.1 496.0 833.3 498.1 833.1 504.2C833.0 510.2 833.0 523.6 832.9 529.8C832.9 535.9 832.9 534.7 832.9 540.8C833.0 547.0 833.0 560.4 833.1 566.4C833.3 572.5 833.1 574.6 833.9 577.2C834.7 579.9 835.5 580.4 837.8 582.2C840.1 584.0 844.4 586.3 847.7 588.1C851.0 589.8 854.6 591.3 857.5 592.5C860.5 593.7 864.1 594.9 865.4 595.4"/>
<path d="M864.4 486.5C862.4 486.6 856.5 486.6 852.6 487.5C848.7 488.3 843.2 490.4 840.8 491.6C838.3 492.7 838.4 492.2 837.8 494.3C837.3 496.4 837.7 498.3 837.6 504.2C837.6 510.1 837.4 523.6 837.3 529.8C837.3 535.9 837.3 534.7 837.3 540.8C837.4 547.0 837.6 560.5 837.6 566.4C837.7 572.3 837.3 574.2 837.8 576.3C838.4 578.4 838.3 577.9 840.8 579.0C843.2 580.2 848.7 582.3 852.6 583.1C856.5 584.0 862.4 584.0 864.4 584.1"/>
<path d="M833.9 493.4L837.8 494.3"/>
<path d="M833.9 577.2L837.8 576.3"/>
<path d="M864.4 486.5C866.9 487.1 873.9 488.9 879.1 490.4C884.4 491.9 893.1 494.5 895.9 495.3"/>
<path d="M864.4 584.1C866.9 583.5 873.9 581.7 879.1 580.2C884.4 578.7 893.1 576.1 895.9 575.3"/>
<path d="M860.9 457.5C862.6 457.0 867.7 456.6 869.3 457.0C870.9 457.3 870.6 457.0 870.8 459.4C871.0 461.9 871.1 469.3 870.5 471.7C869.9 474.1 868.9 473.5 867.3 473.7C865.8 473.9 862.7 473.4 861.4 472.7C860.2 472.0 860.3 472.0 860.0 469.8C859.7 467.5 859.5 461.5 859.7 459.4C859.8 457.4 859.3 457.9 860.9 457.5Z"/>
<path d="M860.9 613.1C862.6 613.6 867.7 614.0 869.3 613.6C870.9 613.3 870.6 613.6 870.8 611.2C871.0 608.7 871.1 601.3 870.5 598.9C869.9 596.5 868.9 597.1 867.3 596.9C865.8 596.7 862.7 597.2 861.4 597.9C860.2 598.6 860.3 598.6 860.0 600.8C859.7 603.1 859.5 609.1 859.7 611.2C859.8 613.2 859.3 612.7 860.9 613.1Z"/>
<path d="M865.4 475.2C866.0 474.3 867.3 471.3 869.3 469.8C871.3 468.2 874.2 466.7 877.2 465.8C880.1 464.9 883.7 464.6 887.0 464.3C890.3 464.1 891.9 464.2 896.9 464.3C901.8 464.5 912.4 464.9 916.5 465.3C920.6 465.7 919.6 465.9 921.4 466.8C923.2 467.7 926.0 469.4 927.3 470.7C928.7 472.0 929.5 473.2 929.3 474.7C929.1 476.1 927.1 478.0 926.4 479.6C925.6 481.2 925.0 482.0 924.9 484.5C924.7 487.0 925.4 491.1 925.4 494.3C925.4 497.6 924.9 498.3 924.9 504.2C924.8 510.1 925.1 523.6 925.2 529.8C925.2 535.9 925.2 534.7 925.2 540.8C925.1 547.0 924.8 560.5 924.9 566.4C924.9 572.3 925.4 573.0 925.4 576.3C925.4 579.5 924.7 583.6 924.9 586.1C925.0 588.6 925.6 589.4 926.4 591.0C927.1 592.6 929.1 594.5 929.3 595.9C929.5 597.4 928.7 598.6 927.3 599.9C926.0 601.2 923.2 602.9 921.4 603.8C919.6 604.7 920.6 604.9 916.5 605.3C912.4 605.7 901.8 606.1 896.9 606.3C891.9 606.4 890.3 606.5 887.0 606.3C883.7 606.0 880.1 605.7 877.2 604.8C874.2 603.9 871.3 602.4 869.3 600.8C867.3 599.3 866.0 596.3 865.4 595.4"/>
<path d="M918.5 464.8C923.1 464.8 941.0 464.5 946.0 464.8C951.0 465.2 948.1 464.2 948.5 466.8C948.9 469.4 948.9 478.0 948.5 480.6C948.1 483.2 949.7 482.2 946.0 482.5C942.3 482.9 929.6 482.5 926.4 482.5"/>
<path d="M918.5 605.8C923.1 605.8 941.0 606.1 946.0 605.8C951.0 605.4 948.1 606.4 948.5 603.8C948.9 601.2 948.9 592.6 948.5 590.0C948.1 587.4 949.7 588.4 946.0 588.1C942.3 587.7 929.6 588.1 926.4 588.1"/>
<path d="M895.9 473.2C894.4 473.2 890.3 473.1 887.0 473.2C883.7 473.3 879.0 473.0 876.2 473.7C873.4 474.4 871.8 475.8 870.3 477.6C868.8 479.4 868.1 481.7 867.3 484.5C866.6 487.3 866.2 489.4 865.9 494.3C865.5 499.3 865.3 508.1 865.2 514.0C865.1 519.9 865.2 525.3 865.2 529.8C865.2 534.2 865.2 536.4 865.2 540.8C865.2 545.3 865.1 550.7 865.2 556.6C865.3 562.5 865.5 571.3 865.9 576.3C866.2 581.2 866.6 583.3 867.3 586.1C868.1 588.9 868.8 591.2 870.3 593.0C871.8 594.8 873.4 596.2 876.2 596.9C879.0 597.6 883.7 597.3 887.0 597.4C890.3 597.5 894.4 597.4 895.9 597.4"/>
<path d="M861.9 487.5C861.8 490.2 861.2 497.1 860.9 504.2C860.7 511.2 860.5 523.6 860.5 529.8C860.4 535.9 860.4 534.7 860.5 540.8C860.5 547.0 860.7 559.4 860.9 566.4C861.2 573.5 861.8 580.4 861.9 583.1"/>
<path d="M883.1 468.3C884.7 468.3 887.0 472.0 888.0 474.7C889.0 477.4 889.1 481.2 889.0 484.5C888.8 487.8 887.9 491.6 887.0 494.3C886.1 497.0 884.8 500.7 883.6 500.7C882.3 500.7 880.8 497.0 879.6 494.3C878.5 491.6 876.9 487.8 876.7 484.5C876.4 481.2 877.1 477.4 878.2 474.7C879.2 472.0 881.4 468.3 883.1 468.3Z"/>
<path d="M883.1 602.3C884.7 602.3 887.0 598.6 888.0 595.9C889.0 593.2 889.1 589.4 889.0 586.1C888.8 582.8 887.9 579.0 887.0 576.3C886.1 573.6 884.8 569.9 883.6 569.9C882.3 569.9 880.8 573.6 879.6 576.3C878.5 579.0 876.9 582.8 876.7 586.1C876.4 589.4 877.1 593.2 878.2 595.9C879.2 598.6 881.4 602.3 883.1 602.3Z"/>
<path d="M896.4 464.3C896.3 469.3 895.9 483.4 895.9 494.3C895.8 505.2 895.9 522.0 895.9 529.8C895.9 537.5 895.9 533.1 895.9 540.8C895.9 548.6 895.8 565.4 895.9 576.3C895.9 587.2 896.3 601.3 896.4 606.3"/>
<path d="M898.8 464.8C898.7 469.8 898.4 483.5 898.3 494.3C898.2 505.2 898.3 522.0 898.3 529.8C898.3 537.5 898.3 533.1 898.3 540.8C898.3 548.6 898.2 565.4 898.3 576.3C898.4 587.1 898.7 600.8 898.8 605.8"/>
<path d="M917.0 467.3C916.7 468.5 915.5 471.8 915.0 474.7C914.6 477.5 914.6 475.3 914.6 484.5C914.5 493.7 914.6 520.4 914.6 529.8C914.6 539.1 914.6 531.5 914.6 540.8C914.6 550.2 914.5 576.9 914.6 586.1C914.6 595.3 914.6 593.1 915.0 595.9C915.5 598.8 916.7 602.1 917.0 603.3"/>
<path d="M925.2 510.1C925.6 510.1 927.3 509.4 927.8 510.1C928.4 510.7 928.2 510.7 928.3 514.0C928.4 517.3 928.3 525.3 928.3 529.8C928.3 534.2 928.3 536.4 928.3 540.8C928.3 545.3 928.4 553.3 928.3 556.6C928.2 559.9 928.4 559.9 927.8 560.5C927.3 561.2 925.6 560.5 925.2 560.5"/>
<path d="M922.9 494.3C923.8 494.6 925.7 496.1 926.4 497.3C927.0 498.4 927.0 499.8 926.8 501.2C926.7 502.6 926.1 504.7 925.4 505.7C924.6 506.6 923.3 507.4 922.4 507.1C921.5 506.9 920.5 505.5 920.0 504.2C919.5 502.9 919.3 500.7 919.5 499.3C919.6 497.9 920.4 496.6 920.9 495.8C921.5 495.0 922.0 494.1 922.9 494.3Z"/>
<path d="M923.2 496.8C923.8 497.0 925.0 497.9 925.4 498.8C925.8 499.6 925.7 500.8 925.6 501.7C925.4 502.6 924.9 503.7 924.4 504.2C923.9 504.7 923.1 504.9 922.6 504.7C922.1 504.4 921.7 503.6 921.4 502.7C921.2 501.8 921.2 500.1 921.2 499.3C921.3 498.4 921.6 497.9 921.9 497.5C922.3 497.1 922.6 496.6 923.2 496.8Z"/>
<path d="M874.2 507.6C874.7 507.4 875.0 505.7 877.2 506.1C879.3 506.6 885.1 509.1 887.0 510.1C888.9 511.1 888.2 508.8 888.5 512.0C888.7 515.3 888.5 525.0 888.5 529.8C888.5 534.6 888.5 536.0 888.5 540.8C888.5 545.6 888.7 555.3 888.5 558.6C888.2 561.8 888.9 559.5 887.0 560.5C885.1 561.5 879.3 564.0 877.2 564.5C875.0 564.9 874.7 563.2 874.2 563.0"/>
<path d="M874.2 507.6C874.1 508.7 873.6 510.3 873.4 514.0C873.3 517.7 873.3 525.3 873.2 529.8C873.2 534.2 873.2 536.4 873.2 540.8C873.3 545.3 873.3 552.9 873.4 556.6C873.6 560.3 874.1 561.9 874.2 563.0" stroke="#b5b5b5" stroke-width="2.2"/>
</g>
</g>
<circle cx="739.5" cy="335.5" r="2.7" fill="#8a8a8a" stroke="none"/><circle cx="746.1" cy="335.5" r="2.7" fill="#8a8a8a" stroke="none"/><circle cx="752.7" cy="335.5" r="2.7" fill="#8a8a8a" stroke="none"/><circle cx="958.5" cy="335.5" r="2.7" fill="#8a8a8a" stroke="none"/><circle cx="965.1" cy="335.5" r="2.7" fill="#8a8a8a" stroke="none"/><circle cx="971.7" cy="335.5" r="2.7" fill="#8a8a8a" stroke="none"/><circle cx="511.0" cy="478.8" r="2.7" fill="#8a8a8a" stroke="none"/><circle cx="517.6" cy="478.8" r="2.7" fill="#8a8a8a" stroke="none"/><circle cx="524.2" cy="478.8" r="2.7" fill="#8a8a8a" stroke="none"/><circle cx="739.5" cy="478.8" r="2.7" fill="#8a8a8a" stroke="none"/><circle cx="746.1" cy="478.8" r="2.7" fill="#8a8a8a" stroke="none"/><circle cx="752.7" cy="478.8" r="2.7" fill="#8a8a8a" stroke="none"/><circle cx="958.5" cy="478.8" r="2.7" fill="#8a8a8a" stroke="none"/><circle cx="965.1" cy="478.8" r="2.7" fill="#8a8a8a" stroke="none"/><circle cx="971.7" cy="478.8" r="2.7" fill="#8a8a8a" stroke="none"/><circle cx="511.0" cy="624.5" r="2.7" fill="#8a8a8a" stroke="none"/><circle cx="517.6" cy="624.5" r="2.7" fill="#8a8a8a" stroke="none"/><circle cx="524.2" cy="624.5" r="2.7" fill="#8a8a8a" stroke="none"/><circle cx="739.5" cy="624.5" r="2.7" fill="#8a8a8a" stroke="none"/><circle cx="746.1" cy="624.5" r="2.7" fill="#8a8a8a" stroke="none"/><circle cx="752.7" cy="624.5" r="2.7" fill="#8a8a8a" stroke="none"/><circle cx="958.5" cy="624.5" r="2.7" fill="#8a8a8a" stroke="none"/><circle cx="965.1" cy="624.5" r="2.7" fill="#8a8a8a" stroke="none"/><circle cx="971.7" cy="624.5" r="2.7" fill="#8a8a8a" stroke="none"/></svg>
<div class="a" style="left:320.4px;top:325px;width:218.6px;height:136.500px;background:rgba(68,94,100,.365);"></div>
<svg style="left:410.700px;top:360px" width="36.400" height="32" viewBox="0 32 512 448" preserveAspectRatio="none"><path fill="#4b5f6c" d="M512 144v288c0 26.500-21.500 48-48 48H48c-26.500 0-48-21.500-48-48V144c0-26.500 21.500-48 48-48h88l12.300-32.900c7-18.700 24.900-31.100 44.900-31.100h125.500c20 0 37.900 12.400 44.900 31.100L376 96h88c26.500 0 48 21.500 48 48zM376 288c0-66.200-53.800-120-120-120s-120 53.800-120 120 53.800 120 120 120 120-53.800 120-120zm-32 0c0 48.500-39.500 88-88 88s-88-39.500-88-88 39.500-88 88-88 88 39.500 88 88z"/></svg>
<div class="a" style="left:358.800px;top:418.800px;width:62.200px;height:24.500px;background:#4b5f6c;border-radius:3px;"></div>
<div class="a" style="left:425.800px;top:418.800px;width:83px;height:24.500px;background:#f58220;border-radius:3px;"></div>
<div class="a" style="left:769.95px;top:428.70px;width:28.600px;height:28.600px;border-radius:50%;background:#2e86cb;color:#fff;font-weight:700;font-size:13.500px;line-height:28.600px;text-align:center;">2</div>
<div class="a" style="left:548.20px;top:574.45px;width:28.600px;height:28.600px;border-radius:50%;background:#2e86cb;color:#fff;font-weight:700;font-size:13.500px;line-height:28.600px;text-align:center;">2</div>
<div class="a" style="left:772.80px;top:715.90px;width:28.600px;height:28.600px;border-radius:50%;background:#2e86cb;color:#fff;font-weight:700;font-size:13.500px;line-height:28.600px;text-align:center;">1</div>

<!-- gallery -->
<svg style="left:0;top:0" width="1708" height="895" viewBox="0 0 1708 895"><defs><filter id="bl" x="-5%" y="-5%" width="110%" height="110%"><feGaussianBlur stdDeviation="0.9"/></filter><filter id="bl2" x="-5%" y="-5%" width="110%" height="110%"><feGaussianBlur stdDeviation="1.4"/></filter><linearGradient id="g1" x1="0" y1="0" x2="0" y2="1"><stop offset="0" stop-color="#dcdcda"/><stop offset="0.55" stop-color="#ecebe8"/><stop offset="0.56" stop-color="#8f8880"/><stop offset="0.8" stop-color="#6f6862"/><stop offset="1" stop-color="#968e86"/></linearGradient><clipPath id="c00"><rect x="1103.90" y="296.10" width="70.38" height="51.50"/></clipPath><linearGradient id="g2" x1="0" y1="0" x2="0" y2="1"><stop offset="0" stop-color="#9aa6b4"/><stop offset="0.14" stop-color="#8894a0"/><stop offset="0.15" stop-color="#3a4630"/><stop offset="0.23" stop-color="#2c3424"/><stop offset="0.24" stop-color="#6c7484"/><stop offset="0.5" stop-color="#747684"/><stop offset="0.6" stop-color="#86706a"/><stop offset="1" stop-color="#8e746c"/></linearGradient><clipPath id="c01"><rect x="1174.28" y="296.10" width="70.38" height="51.50"/></clipPath><linearGradient id="g6" x1="0" y1="0" x2="0" y2="1"><stop offset="0" stop-color="#3c362c"/><stop offset="0.3" stop-color="#5a5040"/><stop offset="0.55" stop-color="#6a5c48"/><stop offset="0.62" stop-color="#3a322a"/><stop offset="1" stop-color="#241f1c"/></linearGradient><clipPath id="c10"><rect x="1103.90" y="347.60" width="70.38" height="50.90"/></clipPath><linearGradient id="g7" x1="0" y1="0" x2="0" y2="1"><stop offset="0" stop-color="#bcc2c8"/><stop offset="0.3" stop-color="#c4c8cc"/><stop offset="0.36" stop-color="#5a5c5a"/><stop offset="0.5" stop-color="#8a8c8c"/><stop offset="0.6" stop-color="#9a9898"/><stop offset="0.62" stop-color="#6a5e5c"/><stop offset="1" stop-color="#5c4e4c"/></linearGradient><clipPath id="c11"><rect x="1174.28" y="347.60" width="70.38" height="50.90"/></clipPath><linearGradient id="g3" x1="0" y1="0" x2="0" y2="1"><stop offset="0" stop-color="#aab0b8"/><stop offset="0.12" stop-color="#8c949c"/><stop offset="0.3" stop-color="#c4c8cc"/><stop offset="0.5" stop-color="#f0f0ee"/><stop offset="0.7" stop-color="#d8d8d4"/><stop offset="0.72" stop-color="#7c7c7c"/><stop offset="1" stop-color="#6c6c6c"/></linearGradient><clipPath id="c02"><rect x="1244.66" y="296.10" width="70.38" height="51.50"/></clipPath><linearGradient id="g4" x1="0" y1="0" x2="0" y2="1"><stop offset="0" stop-color="#4e82c4"/><stop offset="0.35" stop-color="#86aedc"/><stop offset="0.5" stop-color="#a8bcc8"/><stop offset="0.62" stop-color="#8a8a84"/><stop offset="0.72" stop-color="#8c8c8c"/><stop offset="1" stop-color="#7e7e80"/></linearGradient><clipPath id="c03"><rect x="1315.04" y="296.10" width="70.38" height="51.50"/></clipPath><linearGradient id="g8" x1="0" y1="0" x2="0" y2="1"><stop offset="0" stop-color="#d8b244"/><stop offset="0.45" stop-color="#d2aa3c"/><stop offset="0.5" stop-color="#a08030"/><stop offset="0.62" stop-color="#8c8c8a"/><stop offset="0.75" stop-color="#6a6a6a"/><stop offset="1" stop-color="#5c5c5e"/></linearGradient><clipPath id="c12"><rect x="1244.66" y="347.60" width="70.38" height="50.90"/></clipPath><linearGradient id="g9" x1="0" y1="0" x2="0" y2="1"><stop offset="0" stop-color="#b4cee0"/><stop offset="0.3" stop-color="#c8dce8"/><stop offset="0.4" stop-color="#b8a890"/><stop offset="0.6" stop-color="#4e4c4a"/><stop offset="0.78" stop-color="#5a5c5e"/><stop offset="0.8" stop-color="#7c848c"/><stop offset="1" stop-color="#8a9098"/></linearGradient><clipPath id="c13"><rect x="1315.04" y="347.60" width="70.38" height="50.90"/></clipPath><linearGradient id="g5" x1="0" y1="0" x2="0" y2="1"><stop offset="0" stop-color="#b89858"/><stop offset="0.5" stop-color="#b49458"/><stop offset="0.62" stop-color="#a8a49c"/><stop offset="0.75" stop-color="#9c9c9c"/><stop offset="1" stop-color="#8a8a8c"/></linearGradient><clipPath id="c04"><rect x="1385.42" y="296.10" width="70.38" height="51.50"/></clipPath></defs><rect x="1103.9" y="296.1" width="282.02" height="102.39999999999998" fill="#77736e"/><rect x="1103.9" y="296.1" width="351.89999999999986" height="52.0" fill="#77736e"/><g clip-path="url(#c00)"><rect x="1103.90" y="296.10" width="70.38" height="51.50" fill="url(#g1)"/><g filter="url(#bl)"><polygon points="1104.1,299.4 1113.5,305.5 1123.4,315.4 1124.6,332.6 1104.1,332.6" fill="#9c9a98" /><polygon points="1104.1,299.4 1108.6,301.8 1114.8,306.8 1123.4,315.4 1123.4,320.9 1104.1,310.4" fill="#7a4d42" /><rect x="1117.8" y="296.3" width="2.5" height="10.5" fill="#a05048" /><polygon points="1127.7,304.3 1134.4,303.7 1135.0,310.4 1140.6,313.5 1136.9,320.3 1126.4,319.1" fill="#8a8a88" /><rect x="1104.1" y="332.6" width="70.1" height="14.8" fill="#7d756e" /><polygon points="1104.1,341.2 1174.1,338.7 1174.1,347.3 1104.1,347.3" fill="#938b84" /><polygon points="1109.2,332.6 1113.5,327.7 1124.6,324.6 1136.9,320.3 1151.6,319.7 1163.9,322.7 1170.1,327.7 1170.7,333.8 1163.9,338.1 1146.7,341.8 1118.4,342.4 1110.5,339.3" fill="#141414" /><polygon points="1124.0,323.4 1135.0,310.4 1142.4,313.5 1132.6,325.8" fill="#1c1c1e" /><polygon points="1152.3,320.9 1158.8,307.0 1163.4,308.6 1158.4,322.1" fill="#1a1a1c" /><polygon points="1135.7,312.3 1141.2,314.1 1136.9,320.9 1133.2,320.3" fill="#9aa0a8" /><ellipse cx="1141.2" cy="337.7" rx="5.2" ry="5.2" fill="#9a9a9c" /><ellipse cx="1141.2" cy="337.7" rx="2.2" ry="2.2" fill="#444" /><ellipse cx="1167.0" cy="333.2" rx="3.2" ry="3.7" fill="#777" /><ellipse cx="1111.7" cy="331.6" rx="2.2" ry="1.2" fill="#e8e8e8" /><ellipse cx="1130.7" cy="331.1" rx="3.4" ry="1.2" fill="#dcdcdc" /><rect x="1118.4" y="334.4" width="8.0" height="2.1" fill="#c8c8c8" /><rect x="1124.0" y="344.3" width="4.9" height="3.1" fill="#c8c8c0" /></g></g><g clip-path="url(#c01)"><rect x="1174.28" y="296.10" width="70.38" height="51.50" fill="url(#g2)"/><g filter="url(#bl)"><rect x="1175.0" y="296.3" width="69.8" height="7.4" fill="#909ca8" /><rect x="1175.0" y="303.4" width="69.8" height="4.3" fill="#364228" /><polygon points="1223.0,304.3 1244.8,303.7 1244.8,313.5 1235.3,310.4" fill="#20281c" /><rect x="1175.0" y="296.3" width="69.8" height="1.8" fill="#a8b4c0" /><rect x="1243.2" y="296.3" width="1.6" height="51.0" fill="#9aa4b4" opacity="0.7"/><polygon points="1181.2,331.3 1186.1,324.6 1198.4,318.4 1215.6,313.5 1230.3,314.1 1238.9,316.6 1240.8,322.7 1237.7,327.7 1223.0,333.8 1210.7,339.3 1193.4,338.7 1182.4,335.0" fill="#d87a1a" /><polygon points="1188.5,325.2 1198.4,318.4 1215.6,313.9 1224.2,314.7 1220.5,322.1 1207.0,327.7 1193.4,330.1" fill="#3a1a12" /><polygon points="1184.8,327.7 1193.4,330.1 1207.0,327.7 1204.5,332.6 1186.1,332.6" fill="#8a3410" /><polygon points="1227.9,320.3 1234.0,318.4 1234.0,324.0 1229.1,326.4" fill="#2a1408" /><ellipse cx="1214.3" cy="333.2" rx="4.9" ry="6.1" fill="#a8a8a8" /><ellipse cx="1214.3" cy="333.2" rx="2.0" ry="2.5" fill="#555" /><ellipse cx="1237.7" cy="324.0" rx="2.0" ry="3.9" fill="#888" /><polygon points="1186.1,335.0 1210.7,340.0 1223.0,334.4 1223.0,338.1 1208.2,342.4 1186.1,338.1" fill="#3a302c" /></g></g><g clip-path="url(#c10)"><rect x="1103.90" y="347.60" width="70.38" height="50.90" fill="url(#g6)"/><g filter="url(#bl)"><polygon points="1104.1,348.3 1117.2,348.3 1111.7,371.9 1104.1,373.8" fill="#c4a880" /><polygon points="1117.2,348.3 1130.7,348.3 1136.9,367.0 1111.7,371.9" fill="#e4dccc" /><polygon points="1104.1,348.3 1111.1,348.3 1107.4,358.4 1104.1,360.9" fill="#7a6248" /><polygon points="1132.0,348.3 1174.1,348.3 1174.1,355.9 1136.9,353.5" fill="#2c2822" /><polygon points="1136.9,353.5 1174.1,349.8 1174.1,360.9 1139.3,362.1" fill="#5a5044" /><polygon points="1139.3,361.5 1174.1,359.0 1174.1,367.6 1140.6,367.0" fill="#eeeeee" /><polygon points="1140.6,367.6 1174.1,368.2 1174.1,376.8 1149.2,373.2" fill="#8a7a60" /><rect x="1104.1" y="378.1" width="70.1" height="20.3" fill="#26211e" /><polygon points="1104.1,373.2 1112.3,371.9 1112.3,385.4 1104.1,385.4" fill="#3a3430" /><polygon points="1112.3,376.8 1117.2,370.7 1130.7,368.5 1146.7,370.7 1157.8,376.8 1163.9,381.8 1163.3,387.9 1157.8,391.6 1136.9,392.2 1128.3,389.1 1116.0,383.6" fill="#a9a79d" /><polygon points="1120.3,370.7 1130.7,369.2 1146.7,371.3 1150.4,375.0 1130.7,375.6 1121.5,374.6" fill="#2e3648" /><polygon points="1136.9,378.1 1157.8,378.1 1163.3,383.0 1161.5,389.1 1139.3,387.9" fill="#bdbdb6" /><ellipse cx="1114.8" cy="381.1" rx="2.0" ry="3.9" fill="#8a8478" /><ellipse cx="1133.0" cy="387.3" rx="2.7" ry="4.9" fill="#9a968c" /><ellipse cx="1163.9" cy="391.0" rx="5.5" ry="2.2" fill="#a8c8f0" opacity="0.8"/><ellipse cx="1108.6" cy="383.6" rx="3.7" ry="1.7" fill="#90a8d0" opacity="0.6"/><rect x="1148.0" y="383.6" width="13.5" height="3.7" fill="#5a5a58" /></g></g><g clip-path="url(#c11)"><rect x="1174.28" y="347.60" width="70.38" height="50.90" fill="url(#g7)"/><g filter="url(#bl)"><rect x="1175.0" y="348.3" width="69.8" height="17.5" fill="#c0c6cc" /><polygon points="1175.0,355.9 1186.1,354.7 1197.1,358.4 1198.4,367.0 1175.0,368.2" fill="#3c3e3a" /><polygon points="1229.1,357.2 1244.8,354.7 1244.8,368.2 1227.9,368.2" fill="#444642" /><polygon points="1194.7,362.1 1202.1,348.8 1223.0,348.3 1230.3,362.1 1224.2,362.1 1221.1,354.7 1214.3,351.6 1207.0,354.7 1203.3,362.1" fill="#333436" /><rect x="1211.3" y="351.6" width="4.9" height="5.5" fill="#3a3c3e" /><rect x="1175.0" y="365.8" width="69.8" height="12.3" fill="#9c9c9a" /><rect x="1175.0" y="370.7" width="69.8" height="3.1" fill="#c4c4c0" /><rect x="1175.0" y="378.1" width="69.8" height="20.3" fill="#66585a" /><polygon points="1223.0,380.5 1244.8,378.1 1244.8,398.4 1229.1,398.4" fill="#a8a4a2" /><polygon points="1183.6,373.2 1188.5,368.8 1200.8,366.4 1214.3,367.6 1224.2,373.2 1234.0,378.1 1234.6,384.2 1229.1,387.9 1208.2,389.7 1191.0,385.4 1184.8,380.5" fill="#161618" /><polygon points="1200.8,367.6 1213.1,368.2 1218.0,372.5 1202.1,372.5" fill="#3a4048" /><ellipse cx="1187.3" cy="380.8" rx="2.2" ry="4.7" fill="#5a5a5c" /><ellipse cx="1206.4" cy="384.8" rx="3.4" ry="5.2" fill="#6e6e70" /><rect x="1223.0" y="382.4" width="7.4" height="3.1" fill="#8a8a90" /></g></g><g clip-path="url(#c02)"><rect x="1244.66" y="296.10" width="70.38" height="51.50" fill="url(#g3)"/><g filter="url(#bl)"><ellipse cx="1264.6" cy="303.1" rx="22.1" ry="4.9" fill="#7c848c" opacity="0.8"/><ellipse cx="1299.0" cy="300.6" rx="17.2" ry="4.9" fill="#8a9098" opacity="0.8"/><ellipse cx="1254.8" cy="316.6" rx="14.8" ry="7.4" fill="#f4f4f2" /><ellipse cx="1308.9" cy="308.0" rx="7.4" ry="6.1" fill="#eeeeee" /><polygon points="1247.4,328.9 1249.2,320.3 1251.7,328.9" fill="#3a4a30" /><polygon points="1251.1,327.7 1252.9,319.1 1255.4,327.7" fill="#34442c" /><polygon points="1259.7,325.2 1262.7,318.4 1266.4,325.2" fill="#3a4a30" /><rect x="1244.7" y="332.6" width="70.6" height="14.8" fill="#777777" /><polygon points="1244.7,332.6 1315.2,328.9 1315.2,347.3 1244.7,347.3" fill="#6e6e6e" /><polygon points="1289.2,343.6 1315.2,332.6 1315.2,347.3 1291.6,347.3" fill="#555555" /><polygon points="1248.6,335.0 1254.8,328.9 1268.3,322.7 1280.6,316.6 1294.1,314.1 1303.9,316.6 1310.7,321.5 1311.3,328.9 1306.4,332.6 1295.3,338.7 1270.7,343.0 1252.3,341.2" fill="#d62a1a" /><polygon points="1297.8,317.8 1306.4,317.2 1311.3,322.7 1311.1,330.1 1301.5,334.4 1297.8,328.9" fill="#d8601e" /><polygon points="1275.7,319.7 1281.8,316.0 1294.7,314.4 1297.8,318.4 1286.7,322.1" fill="#2c1010" /><polygon points="1249.8,338.1 1270.7,339.3 1292.9,335.0 1294.1,338.7 1270.7,343.4 1252.3,341.4" fill="#5a1008" /><ellipse cx="1284.3" cy="326.4" rx="3.7" ry="1.5" fill="#f4f0e8" /><ellipse cx="1256.0" cy="328.9" rx="2.5" ry="1.0" fill="#f0c8c0" /><ellipse cx="1299.0" cy="330.1" rx="2.5" ry="6.1" fill="#3a3a3a" /><ellipse cx="1299.0" cy="330.1" rx="1.4" ry="3.7" fill="#b8b8b8" /><ellipse cx="1309.5" cy="325.8" rx="1.2" ry="3.9" fill="#444" /></g></g><g clip-path="url(#c03)"><rect x="1315.04" y="296.10" width="70.38" height="51.50" fill="url(#g4)"/><g filter="url(#bl)"><polygon points="1360.5,311.7 1375.3,307.4 1384.8,308.0 1384.8,322.7 1358.0,322.7" fill="#6e7058" /><polygon points="1315.2,316.6 1326.1,315.4 1328.5,324.0 1315.2,327.7" fill="#3a3c34" /><rect x="1315.2" y="332.6" width="69.6" height="14.8" fill="#8a8a8c" /><polygon points="1315.2,340.6 1384.8,338.7 1384.8,347.3 1315.2,347.3" fill="#808084" /><polygon points="1319.9,328.9 1321.8,320.9 1329.8,316.0 1335.9,311.1 1361.7,310.4 1369.1,316.0 1378.9,319.7 1383.2,325.2 1382.6,334.4 1375.3,338.1 1333.4,340.2 1322.4,337.5" fill="#c8222a" /><polygon points="1334.7,317.8 1338.4,312.3 1361.1,311.7 1365.4,317.2" fill="#4a1018" /><polygon points="1337.1,325.8 1350.7,325.4 1354.3,333.2 1340.8,333.8" fill="#1e1012" /><polygon points="1372.8,325.2 1382.0,324.2 1381.4,331.3 1374.0,332.6" fill="#1e1012" /><rect x="1355.6" y="325.4" width="16.6" height="4.7" fill="#e8e8e8" /><rect x="1354.3" y="330.1" width="19.7" height="3.4" fill="#2a1416" /><ellipse cx="1340.8" cy="325.4" rx="4.7" ry="1.5" fill="#f4f0f0" /><ellipse cx="1378.9" cy="323.4" rx="3.2" ry="1.2" fill="#f0eeee" /><ellipse cx="1330.4" cy="333.8" rx="2.7" ry="6.4" fill="#3a3a3c" /><ellipse cx="1330.4" cy="333.8" rx="1.5" ry="4.2" fill="#b0b0b0" /><polygon points="1324.8,339.3 1375.3,338.5 1382.6,335.0 1383.2,339.3 1375.3,341.2 1326.1,341.8" fill="#4a4448" /></g></g><g clip-path="url(#c12)"><rect x="1244.66" y="347.60" width="70.38" height="50.90" fill="url(#g8)"/><g filter="url(#bl)"><rect x="1244.7" y="348.3" width="13.8" height="32.2" fill="#d4d4d2" /><rect x="1247.4" y="348.3" width="4.9" height="32.2" fill="#bcbcb8" /><rect x="1258.4" y="348.3" width="52.9" height="17.5" fill="#d8b040" /><rect x="1258.4" y="348.3" width="52.9" height="1.5" fill="#c49a30" /><rect x="1262.4" y="350.8" width="6.9" height="11.9" fill="#ece4d0" /><rect x="1269.8" y="350.8" width="6.9" height="11.9" fill="#ece4d0" /><rect x="1280.2" y="350.8" width="6.9" height="11.9" fill="#ece4d0" /><rect x="1291.3" y="350.8" width="6.9" height="11.9" fill="#ece4d0" /><rect x="1301.1" y="350.8" width="6.9" height="11.9" fill="#ece4d0" /><rect x="1263.9" y="352.9" width="3.9" height="8.6" fill="#3c3e44" /><rect x="1271.2" y="352.9" width="3.9" height="8.6" fill="#3c3e44" /><rect x="1281.7" y="352.9" width="3.9" height="8.6" fill="#3c3e44" /><rect x="1292.7" y="352.9" width="3.9" height="8.6" fill="#3c3e44" /><rect x="1302.6" y="352.9" width="3.9" height="8.6" fill="#3c3e44" /><rect x="1252.3" y="351.6" width="3.1" height="9.2" fill="#4a4c50" /><rect x="1305.8" y="348.3" width="4.9" height="10.7" fill="#c03030" /><rect x="1307.4" y="348.3" width="1.7" height="10.7" fill="#f0e8e8" /><polygon points="1275.7,371.9 1276.9,365.8 1289.2,363.9 1306.4,365.2 1308.9,373.2" fill="#6e5420" /><rect x="1258.4" y="365.8" width="52.9" height="12.3" fill="#c8a23a" /><ellipse cx="1268.9" cy="367.0" rx="4.9" ry="6.1" fill="#4a4a30" /><rect x="1244.7" y="378.1" width="70.6" height="8.6" fill="#8e8e8c" /><rect x="1244.7" y="386.1" width="70.6" height="12.3" fill="#626264" /><polygon points="1252.9,378.1 1257.2,374.4 1273.2,370.7 1280.6,367.2 1297.8,367.0 1306.4,373.2 1310.3,379.3 1309.8,386.1 1286.7,390.4 1258.4,389.1 1253.3,385.4" fill="#b6b6b8" /><polygon points="1273.8,371.7 1281.2,368.2 1297.2,368.0 1302.1,373.2" fill="#474d55" /><polygon points="1256.0,377.5 1269.5,376.8 1268.9,382.4 1257.2,382.7" fill="#242426" /><ellipse cx="1287.3" cy="385.4" rx="3.7" ry="5.9" fill="#3c3c3e" /><ellipse cx="1287.3" cy="385.4" rx="2.2" ry="3.9" fill="#b4b4b4" /><ellipse cx="1307.6" cy="383.6" rx="2.0" ry="4.7" fill="#444" /><polygon points="1253.5,386.7 1286.7,391.0 1310.1,386.7 1310.1,389.7 1286.7,394.1 1253.5,390.4" fill="#3e3e40" /></g></g><g clip-path="url(#c13)"><rect x="1315.04" y="347.60" width="70.38" height="50.90" fill="url(#g9)"/><g filter="url(#bl)"><polygon points="1315.2,370.7 1319.9,360.9 1326.1,353.5 1335.9,352.0 1342.1,358.4 1343.3,370.7" fill="#d89248" /><polygon points="1347.0,370.7 1354.3,360.9 1366.6,355.9 1374.0,360.9 1378.9,370.7" fill="#da9a54" /><polygon points="1326.1,353.5 1335.9,352.0 1338.4,355.9 1328.5,358.4" fill="#e8b070" /><polygon points="1315.2,371.9 1343.3,363.3 1350.7,365.8 1384.8,368.2 1384.8,389.1 1315.2,389.1" fill="#4a4a4a" /><polygon points="1315.2,370.7 1326.1,365.8 1340.8,364.5 1326.1,378.1 1315.2,380.5" fill="#6a6258" /><rect x="1315.2" y="387.9" width="69.6" height="10.5" fill="#808890" /><polygon points="1324.8,383.0 1333.4,378.1 1344.5,372.5 1363.0,371.9 1374.0,375.6 1378.9,381.8 1378.3,390.4 1350.7,394.1 1327.3,391.6" fill="#8597a7" /><polygon points="1339.6,378.1 1345.7,373.2 1363.0,372.7 1370.3,376.8" fill="#262c34" /><polygon points="1326.1,383.6 1350.7,383.6 1350.7,390.4 1327.3,389.1" fill="#9fb1bf" /><rect x="1330.4" y="383.0" width="8.0" height="2.7" fill="#20242a" /><rect x="1339.8" y="383.0" width="8.1" height="2.7" fill="#20242a" /><ellipse cx="1355.6" cy="389.7" rx="3.2" ry="4.9" fill="#2e3034" /><ellipse cx="1355.6" cy="389.7" rx="1.7" ry="3.0" fill="#9aa0a6" /><ellipse cx="1375.3" cy="389.1" rx="2.0" ry="4.4" fill="#34363a" /><polygon points="1326.1,390.4 1350.7,394.3 1378.3,390.4 1378.3,394.1 1350.7,397.1 1326.1,393.4" fill="#3a3e44" /></g></g><g clip-path="url(#c04)"><rect x="1385.42" y="296.10" width="70.38" height="51.50" fill="url(#g5)"/><g filter="url(#bl)"><rect x="1385.4" y="296.3" width="24.0" height="24.0" fill="#4c321c" /><rect x="1393.3" y="305.5" width="12.3" height="15.4" fill="#b4843c" /><rect x="1385.4" y="296.3" width="24.0" height="4.3" fill="#3a2414" /><rect x="1409.3" y="296.3" width="18.4" height="26.4" fill="#cbbb9b" /><rect x="1415.5" y="296.3" width="9.8" height="22.7" fill="#b8904e" /><rect x="1427.7" y="296.3" width="3.7" height="22.7" fill="#5c452c" /><rect x="1431.4" y="296.3" width="15.4" height="27.6" fill="#d2c2a2" /><rect x="1446.2" y="296.3" width="9.6" height="24.6" fill="#c8903c" /><rect x="1385.4" y="332.5" width="70.4" height="15.0" fill="#959595" /><polygon points="1385.4,338.7 1455.7,337.5 1455.7,347.5 1385.4,347.5" fill="#8a8a8c" /><polygon points="1387.8,328.9 1390.9,322.1 1401.9,317.2 1414.2,315.6 1433.9,317.2 1446.2,322.7 1452.9,328.9 1452.6,335.0 1438.8,338.1 1400.7,338.1 1389.7,335.0" fill="#4a4a4e" /><polygon points="1403.2,319.6 1414.2,316.6 1433.9,318.0 1440.0,322.1 1421.6,322.7" fill="#2a2a2e" /><polygon points="1419.1,324.6 1438.8,323.3 1451.1,328.9 1443.7,331.3 1422.8,330.1" fill="#66666a" /><ellipse cx="1411.8" cy="332.8" rx="4.4" ry="5.4" fill="#c8c8c8" /><ellipse cx="1411.8" cy="332.8" rx="1.7" ry="2.2" fill="#555" /><ellipse cx="1391.1" cy="331.1" rx="2.5" ry="4.7" fill="#a8a8a8" /><polygon points="1422.8,332.5 1451.1,331.3 1452.3,335.6 1438.8,338.4 1424.1,337.7" fill="#222224" /><polygon points="1389.7,336.2 1438.8,339.3 1452.9,335.6 1452.9,339.3 1438.8,341.4 1390.9,339.3" fill="#4c4c4e" /></g></g><rect x="1385.42" y="347.60" width="70.38" height="50.90" fill="#e5e5e5"/><circle cx="1412.1" cy="372.7" r="3.9" fill="#7d868c"/><circle cx="1421.6" cy="372.7" r="3.9" fill="#7d868c"/><circle cx="1431.1" cy="372.7" r="3.9" fill="#7d868c"/></svg>

<!-- icons -->
<!-- sidebar icons -->
<svg style="left:165.7px;top:21.7px" width="23.7" height="15.4" viewBox="0 0 23.7 15.4"><path fill="#fff" d="M0 0h23.700v2.600H0zM0 6.400h23.700v2.600H0zM0 12.800h23.700v2.600H0z"/></svg>
<svg style="left:165.5px;top:77px" width="23" height="19.6" viewBox="0 28 576 456" preserveAspectRatio="none"><path fill="#fff" d="M280.370 148.260L96 300.110V464a16 16 0 0 0 16 16l112.060-.290a16 16 0 0 0 15.920-16V368a16 16 0 0 1 16-16h64a16 16 0 0 1 16 16v95.640a16 16 0 0 0 16 16.050L464 480a16 16 0 0 0 16-16V300L295.670 148.260a12.190 12.190 0 0 0-15.300 0zM571.600 251.470L488 182.560V44.050a12 12 0 0 0-12-12h-56a12 12 0 0 0-12 12v72.610L318.470 43a48 48 0 0 0-61 0L4.340 251.470a12 12 0 0 0-1.600 16.900l25.500 31A12 12 0 0 0 45.150 301l235.220-193.740a12.190 12.190 0 0 1 15.300 0L530.900 301a12 12 0 0 0 16.900-1.600l25.500-31a12 12 0 0 0-1.700-16.930z"/></svg>
<svg style="left:164.5px;top:134px" width="25.5" height="18.6" viewBox="0 32 640 448" preserveAspectRatio="none"><path fill="#fff" d="M192 256c61.900 0 112-50.100 112-112S253.900 32 192 32 80 82.100 80 144s50.100 112 112 112zm76.800 32h-8.300c-20.800 10-43.900 16-68.500 16s-47.600-6-68.500-16h-8.300C51.600 288 0 339.600 0 403.200V432c0 26.500 21.500 48 48 48h288c26.500 0 48-21.500 48-48v-28.800c0-63.600-51.600-115.200-115.200-115.200zM480 256c53 0 96-43 96-96s-43-96-96-96-96 43-96 96 43 96 96 96zm48 32h-3.800c-13.900 4.800-28.600 8-44.200 8s-30.300-3.200-44.200-8H432c-20.400 0-39.200 5.900-55.700 15.400 24.400 26.300 39.700 61.200 39.700 99.800v38.400c0 2.200-.5 4.300-.6 6.400H592c26.500 0 48-21.500 48-48 0-61.900-50.100-112-112-112z"/></svg>
<svg style="left:169.8px;top:188.8px" width="15.8" height="21.2" viewBox="0 0 384 512" preserveAspectRatio="none"><path fill="#1e9ceb" d="M336 64h-80c0-35.300-28.700-64-64-64s-64 28.700-64 64H48C21.500 64 0 85.500 0 112v352c0 26.500 21.500 48 48 48h288c26.500 0 48-21.500 48-48V112c0-26.500-21.500-48-48-48zM96 424c-13.300 0-24-10.700-24-24s10.700-24 24-24 24 10.700 24 24-10.700 24-24 24zm0-96c-13.300 0-24-10.700-24-24s10.700-24 24-24 24 10.700 24 24-10.700 24-24 24zm0-96c-13.300 0-24-10.700-24-24s10.700-24 24-24 24 10.700 24 24-10.700 24-24 24zm96-192c13.300 0 24 10.700 24 24s-10.700 24-24 24-24-10.700-24-24 10.700-24 24-24zm128 368c0 4.400-3.600 8-8 8H168c-4.400 0-8-3.600-8-8v-16c0-4.400 3.600-8 8-8h144c4.400 0 8 3.600 8 8v16zm0-96c0 4.400-3.600 8-8 8H168c-4.400 0-8-3.600-8-8v-16c0-4.400 3.600-8 8-8h144c4.400 0 8 3.600 8 8v16zm0-96c0 4.400-3.600 8-8 8H168c-4.400 0-8-3.600-8-8v-16c0-4.400 3.600-8 8-8h144c4.400 0 8 3.600 8 8v16z"/></svg>
<svg style="left:169.8px;top:245px" width="15.5" height="20.8" viewBox="0 0 384 512" preserveAspectRatio="none"><path fill="#fff" fill-rule="evenodd" d="M224 136V0H24C10.700 0 0 10.700 0 24v464c0 13.300 10.700 24 24 24h336c13.300 0 24-10.700 24-24V160H248c-13.200 0-24-10.800-24-24zM64 72c0-4.420 3.580-8 8-8h80c4.420 0 8 3.580 8 8v16c0 4.420-3.580 8-8 8H72c-4.420 0-8-3.580-8-8V72zm0 64c0-4.420 3.580-8 8-8h80c4.420 0 8 3.580 8 8v16c0 4.420-3.580 8-8 8H72c-4.420 0-8-3.580-8-8v-16zM377 105L279.100 7c-4.500-4.500-10.600-7-17-7H256v128h128v-6.100c0-6.300-2.500-12.400-7-16.900z"/></svg>
<div class="t" style="left:174.800px;top:253px;font-size:9.800px;font-weight:700;color:#4b5f6c;">$</div>
<svg style="left:167px;top:301.3px" width="20.5" height="20.5" viewBox="0 0 512 512"><path fill="#fff" d="M507.730 109.100c-2.240-9.030-13.540-12.090-20.120-5.510l-74.360 74.360-67.880-11.310-11.310-67.880 74.360-74.360c6.620-6.620 3.430-17.900-5.660-20.160-47.380-11.740-99.550.91-136.580 37.930-39.640 39.640-50.550 97.100-34.050 147.200L18.740 402.760c-24.990 24.990-24.990 65.510 0 90.500 24.990 24.990 65.510 24.990 90.500 0l213.210-213.210c50.120 16.710 107.470 5.680 147.370-34.220 37.070-37.070 49.700-89.320 37.910-136.730zM64 472c-13.250 0-24-10.750-24-24 0-13.260 10.750-24 24-24s24 10.740 24 24c0 13.250-10.750 24-24 24z"/></svg>
<!-- logo -->
<svg style="left:240px;top:18px" width="120" height="24" viewBox="0 0 120 24"><text transform="translate(1.7 18.050) scale(1.385 1)" x="0" y="0" font-family="Liberation Sans, sans-serif" font-weight="700" font-size="18.600" letter-spacing="1.250" fill="#fff" stroke="#fff" stroke-width="0.550">EPICOR</text><circle cx="112.700" cy="17.700" r="0.9" fill="#e8f4ff"/></svg>
<!-- header right icons -->
<svg style="left:1300px;top:19.400px" width="19.700" height="21.800" viewBox="0 0 448 512" preserveAspectRatio="none"><path fill="#fff" d="M224 256c70.700 0 128-57.300 128-128S294.700 0 224 0 96 57.300 96 128s57.300 128 128 128zm89.600 32h-16.700c-22.200 10.200-46.900 16-72.900 16s-50.600-5.800-72.900-16h-16.700C60.200 288 0 348.200 0 422.400V464c0 26.500 21.500 48 48 48h352c26.500 0 48-21.500 48-48v-41.600c0-74.200-60.200-134.400-134.400-134.400z"/></svg>
<svg style="left:1434.500px;top:27.800px" width="8.600" height="4.400" viewBox="0 0 8.600 4.400"><path fill="#fff" d="M0 0h8.600L4.300 4.400z"/></svg>
<svg style="left:1479.500px;top:18.400px" width="19" height="22.800" viewBox="0 0 448 512" preserveAspectRatio="none"><path fill="#fff" d="M439.390 362.290c-19.320-20.760-55.470-51.990-55.470-154.290 0-77.700-54.480-139.900-127.940-155.160V32c0-17.670-14.320-32-31.980-32s-31.980 14.330-31.980 32v20.840C118.560 68.100 64.080 130.300 64.080 208c0 102.300-36.150 133.530-55.470 154.290-6 6.450-8.660 14.160-8.610 21.710.11 16.400 12.980 32 32.100 32h383.800c19.120 0 32-15.600 32.100-32 .05-7.550-2.610-15.270-8.610-21.710zM67.530 368c21.220-27.970 44.420-74.330 44.530-159.420 0-.2-.06-.38-.06-.58 0-61.860 50.140-112 112-112s112 50.140 112 112c0 .2-.06.38-.06.580.11 85.100 23.310 131.460 44.530 159.420H67.530zM224 512c35.320 0 63.970-28.650 63.970-64H160.030c0 35.350 28.650 64 63.970 64z"/></svg>
<div class="a" style="left:1492.400px;top:14.100px;width:16.800px;height:16.800px;border-radius:50%;background:#ee1c25;"></div>
<svg style="left:1530px;top:21px" width="6" height="18" viewBox="0 0 6 18"><circle cx="3" cy="3" r="2.400" fill="#fff"/><circle cx="3" cy="9" r="2.400" fill="#fff"/><circle cx="3" cy="15.200" r="2.400" fill="#fff"/></svg>
<!-- step icons -->
<svg style="left:289.500px;top:167px" width="14.300" height="15.600" viewBox="0 0 448 512" preserveAspectRatio="none"><path fill="#c4c4c4" d="M224 256c70.700 0 128-57.300 128-128S294.700 0 224 0 96 57.300 96 128s57.300 128 128 128zm89.600 32h-16.700c-22.200 10.200-46.900 16-72.900 16s-50.600-5.800-72.900-16h-16.700C60.200 288 0 348.200 0 422.400V464c0 26.500 21.500 48 48 48h352c26.500 0 48-21.500 48-48v-41.600c0-74.200-60.200-134.400-134.400-134.400z"/></svg>
<svg style="left:713px;top:169px" width="15.200" height="12" viewBox="0 64 512 384" preserveAspectRatio="none"><path fill="#c4c4c4" d="M499.990 176h-59.870l-16.640-41.600C406.380 91.630 365.570 64 319.500 64h-127c-46.060 0-86.880 27.630-103.990 70.400L71.870 176H12.010C4.200 176-1.530 183.340.37 190.910l6 24C7.700 220.250 12.500 224 18.010 224h20.070C24.650 235.730 16 252.780 16 272v48c0 16.120 6.160 30.670 16 41.930V416c0 17.670 14.330 32 32 32h32c17.670 0 32-14.330 32-32v-32h256v32c0 17.670 14.330 32 32 32h32c17.670 0 32-14.330 32-32v-54.070c9.840-11.250 16-25.800 16-41.930v-48c0-19.220-8.650-36.270-22.070-48H494c5.510 0 10.310-3.750 11.640-9.090l6-24c1.890-7.570-3.840-14.910-11.650-14.910zm-352.060-17.830c7.290-18.220 24.940-30.170 44.570-30.170h127c19.630 0 37.280 11.950 44.570 30.170L384 208H128l19.930-49.830zM96 319.800c-19.200 0-32-12.760-32-31.900S76.800 256 96 256s48 28.710 48 47.850-28.800 15.950-48 15.950zm320 0c-19.200 0-48 3.190-48-15.950S396.800 256 416 256s32 12.760 32 31.900-12.800 31.900-32 31.900z"/></svg>
<svg style="left:1117px;top:167.500px" width="11.800" height="15" viewBox="0 0 384 512" preserveAspectRatio="none"><path fill="#1f3038" d="M336 64h-80c0-35.300-28.700-64-64-64s-64 28.700-64 64H48C21.500 64 0 85.500 0 112v352c0 26.500 21.500 48 48 48h288c26.500 0 48-21.500 48-48V112c0-26.500-21.500-48-48-48zm-6 400H54c-3.300 0-6-2.700-6-6V118c0-3.300 2.700-6 6-6h42v36c0 6.600 5.400 12 12 12h168c6.600 0 12-5.400 12-12v-36h42c3.300 0 6 2.700 6 6v340c0 3.300-2.700 6-6 6zM192 40c13.300 0 24 10.700 24 24s-10.700 24-24 24-24-10.700-24-24 10.700-24 24-24"/></svg>
<svg style="left:310.500px;top:262px" width="12.500" height="15.200" viewBox="0 0 384 512" preserveAspectRatio="none"><path fill="#1f2d35" d="M336 64h-80c0-35.300-28.700-64-64-64s-64 28.700-64 64H48C21.500 64 0 85.500 0 112v352c0 26.500 21.500 48 48 48h288c26.500 0 48-21.500 48-48V112c0-26.500-21.500-48-48-48zm-6 400H54c-3.300 0-6-2.700-6-6V118c0-3.300 2.700-6 6-6h42v36c0 6.600 5.400 12 12 12h168c6.600 0 12-5.400 12-12v-36h42c3.300 0 6 2.700 6 6v340c0 3.300-2.700 6-6 6zM192 40c13.300 0 24 10.700 24 24s-10.700 24-24 24-24-10.700-24-24 10.700-24 24-24"/></svg>
<!-- step circles -->
<svg style="left:689.500px;top:203.500px" width="15" height="15" viewBox="0 0 512 512"><circle cx="256" cy="256" r="200" fill="#fff"/><path fill="#8ecb72" d="M256 8c137 0 248 111 248 248S393 504 256 504 8 393 8 256 119 8 256 8zm113.900 231L234.400 103.500c-9.400-9.400-24.600-9.400-33.900 0l-17 17c-9.400 9.400-9.400 24.600 0 33.900L285.100 256 183.500 357.600c-9.400 9.400-9.400 24.600 0 33.900l17 17c9.400 9.400 24.600 9.400 33.900 0L369.900 273c9.400-9.400 9.400-24.600 0-34z"/></svg>
<svg style="left:1090.500px;top:203.500px" width="15" height="15" viewBox="0 0 512 512"><circle cx="256" cy="256" r="200" fill="#fff"/><path fill="#8ecb72" d="M256 8c137 0 248 111 248 248S393 504 256 504 8 393 8 256 119 8 256 8zm113.900 231L234.400 103.500c-9.400-9.400-24.600-9.400-33.900 0l-17 17c-9.400 9.400-9.400 24.600 0 33.900L285.100 256 183.500 357.600c-9.400 9.400-9.400 24.600 0 33.900l17 17c9.400 9.400 24.600 9.400 33.900 0L369.900 273c9.400-9.400 9.400-24.600 0-34z"/></svg>
<svg style="left:1454.200px;top:203.500px" width="15" height="15" viewBox="0 0 512 512"><circle cx="256" cy="256" r="200" fill="#e8e8e8"/><path fill="#9a9a9a" d="M504 256c0 136.967-111.033 248-248 248S8 392.967 8 256 119.033 8 256 8s248 111.033 248 248zM227.314 387.314l184-184c6.248-6.248 6.248-16.379 0-22.627l-22.627-22.627c-6.248-6.249-16.379-6.249-22.628 0L216 308.118l-70.059-70.059c-6.248-6.248-16.379-6.248-22.628 0l-22.627 22.627c-6.248 6.248-6.248 16.379 0 22.627l104 104c6.249 6.249 16.379 6.249 22.628.001z"/></svg>
<!-- info icon -->
<svg style="left:1335.500px;top:637px" width="17.400" height="17.400" viewBox="0 0 512 512"><circle cx="256" cy="256" r="200" fill="#fff"/><path fill="#0f222b" d="M256 8C119.043 8 8 119.083 8 256c0 136.997 111.043 248 248 248s248-111.003 248-248C504 119.083 392.957 8 256 8zm0 110c23.196 0 42 18.804 42 42s-18.804 42-42 42-42-18.804-42-42 18.804-42 42-42zm56 254c0 6.627-5.373 12-12 12h-88c-6.627 0-12-5.373-12-12v-24c0-6.627 5.373-12 12-12h12v-64h-12c-6.627 0-12-5.373-12-12v-24c0-6.627 5.373-12 12-12h64c6.627 0 12 5.373 12 12v100h12c6.627 0 12 5.373 12 12v24z"/></svg>
<!-- radios -->
<div class="a" style="left:1118.300px;top:726px;width:13.400px;height:13.400px;border:1.600px solid #3c9fd8;border-radius:50%;box-sizing:content-box;background:#fff;"></div>
<div class="a" style="left:1123.800px;top:731.500px;width:5.600px;height:5.600px;border-radius:50%;background:#2a90d0;"></div>
<div class="a" style="left:1185.900px;top:726px;width:13.400px;height:13.400px;border:1.600px solid #3c9fd8;border-radius:50%;box-sizing:content-box;background:#fff;"></div>

<!-- texts -->
<div class="t" style="left:1328.40px;top:18.62px;font-size:12.5px;font-weight:400;color:#fff;transform:scaleX(0.9669);transform-origin:0 0;">Sandra Harrison</div>
<div class="t" style="left:1328.40px;top:31.83px;font-size:10px;font-weight:400;color:#fff;transform:scaleX(0.9681);transform-origin:0 0;">Service Dealer</div>
<div class="t" style="left:291.90px;top:80.58px;font-size:11.6px;font-weight:400;color:#3b97c8;transform:scaleX(1.0226);transform-origin:0 0;">Dashboard</div>
<div class="t" style="left:291.20px;top:101.96px;font-size:18px;font-weight:400;color:#37424a;letter-spacing:0.404px;transform:scaleX(1.1300);transform-origin:0 0;-webkit-text-stroke:0.25px #37424a;">Create new order</div>
<div class="t" style="left:310.00px;top:169.34px;font-size:13.3px;font-weight:700;color:#c5c5c5;transform:scaleX(1.1007);transform-origin:0 0;">Select Customer</div>
<div class="t" style="left:310.00px;top:186.69px;font-size:11px;font-weight:400;color:#cbcbcb;transform:scaleX(0.9128);transform-origin:0 0;">Select customer</div>
<div class="t" style="left:742.00px;top:169.34px;font-size:13.3px;font-weight:700;color:#c5c5c5;transform:scaleX(1.1048);transform-origin:0 0;">Select Vehicle</div>
<div class="t" style="left:743.00px;top:186.69px;font-size:11px;font-weight:400;color:#cbcbcb;transform:scaleX(0.8983);transform-origin:0 0;">By VIN or YMME</div>
<div class="t" style="left:1138.00px;top:168.34px;font-size:13.3px;font-weight:700;color:#1f3038;transform:scaleX(1.0997);transform-origin:0 0;">Visual Inspection</div>
<div class="t" style="left:1138.00px;top:186.69px;font-size:11px;font-weight:400;color:#7d868c;transform:scaleX(0.9128);transform-origin:0 0;">Check symptoms</div>
<div class="t" style="left:330.00px;top:259.64px;font-size:18.5px;font-weight:400;color:#1f2d35;letter-spacing:0.074px;transform:scaleX(1.1300);transform-origin:0 0;">Visual Inspection</div>
<div class="t" style="left:318.00px;top:288.73px;font-size:14.5px;font-weight:400;color:#666;transform:scaleX(0.9877);transform-origin:0 0;">Click or tap squares to take or upload photo evidences.</div>
<div class="t" style="left:1107.50px;top:259.94px;font-size:18.5px;font-weight:400;color:#1f2d35;transform:scaleX(1.1151);transform-origin:0 0;">Photo Gallery</div>
<div class="t" style="left:1107.30px;top:445.84px;font-size:18.5px;font-weight:400;color:#1f2d35;letter-spacing:0.256px;transform:scaleX(1.1300);transform-origin:0 0;">Reported symptoms</div>
<div class="t" style="left:1122.20px;top:488.48px;font-size:15.5px;font-weight:400;color:#5e5e5e;transform:scaleX(1.0087);transform-origin:0 0;">Customer says that his car is making a</div>
<div class="t" style="left:1122.20px;top:508.08px;font-size:15.5px;font-weight:400;color:#5e5e5e;transform:scaleX(1.0600);transform-origin:0 0;">rattling noise when</div>
<div class="t" style="left:1111.30px;top:637.34px;font-size:18.5px;font-weight:400;color:#1f2d35;letter-spacing:0.109px;transform:scaleX(1.1300);transform-origin:0 0;">Run Digital Inspection?</div>
<div class="t" style="left:1123.20px;top:679.92px;font-size:12.5px;font-weight:700;color:#7a5c1e;transform:scaleX(1.0227);transform-origin:0 0;">Digital scanner device must be connected to the car.</div>
<div class="t" style="left:1143.70px;top:726.48px;font-size:15.5px;font-weight:400;color:#333;transform:scaleX(0.8060);transform-origin:0 0;">YES</div>
<div class="t" style="left:1207.00px;top:726.48px;font-size:15.5px;font-weight:400;color:#333;transform:scaleX(0.9376);transform-origin:0 0;">NO</div>
<div class="t" style="left:1130.40px;top:814.84px;font-size:13.3px;font-weight:700;color:#4b5f6c;transform:scaleX(1.0468);transform-origin:0 0;">CANCEL</div>
<div class="t" style="left:1223.40px;top:814.84px;font-size:13.3px;font-weight:700;color:#fff;transform:scaleX(1.0739);transform-origin:0 0;">PREVIOUS</div>
<div class="t" style="left:1343.60px;top:814.84px;font-size:13.3px;font-weight:700;color:#fff;transform:scaleX(1.0626);transform-origin:0 0;">CREATE ORDER</div>
<div class="t" style="left:370.50px;top:424.50px;font-size:13px;font-weight:700;color:#fff;transform:scaleX(1.0454);transform-origin:0 0;">TAKE</div>
<div class="t" style="left:438.50px;top:424.50px;font-size:13px;font-weight:700;color:#fff;transform:scaleX(1.0840);transform-origin:0 0;">UPLOAD</div>
<div class="t" style="left:520.80px;top:332.47px;font-size:11.5px;font-weight:700;color:#3f525e;">x</div>
<div class="t" style="left:150.00px;top:883.64px;font-size:12px;font-weight:700;color:#fff;transform:scaleX(0.9506);transform-origin:0 0;">SHOW</div>
</div></body></html>
